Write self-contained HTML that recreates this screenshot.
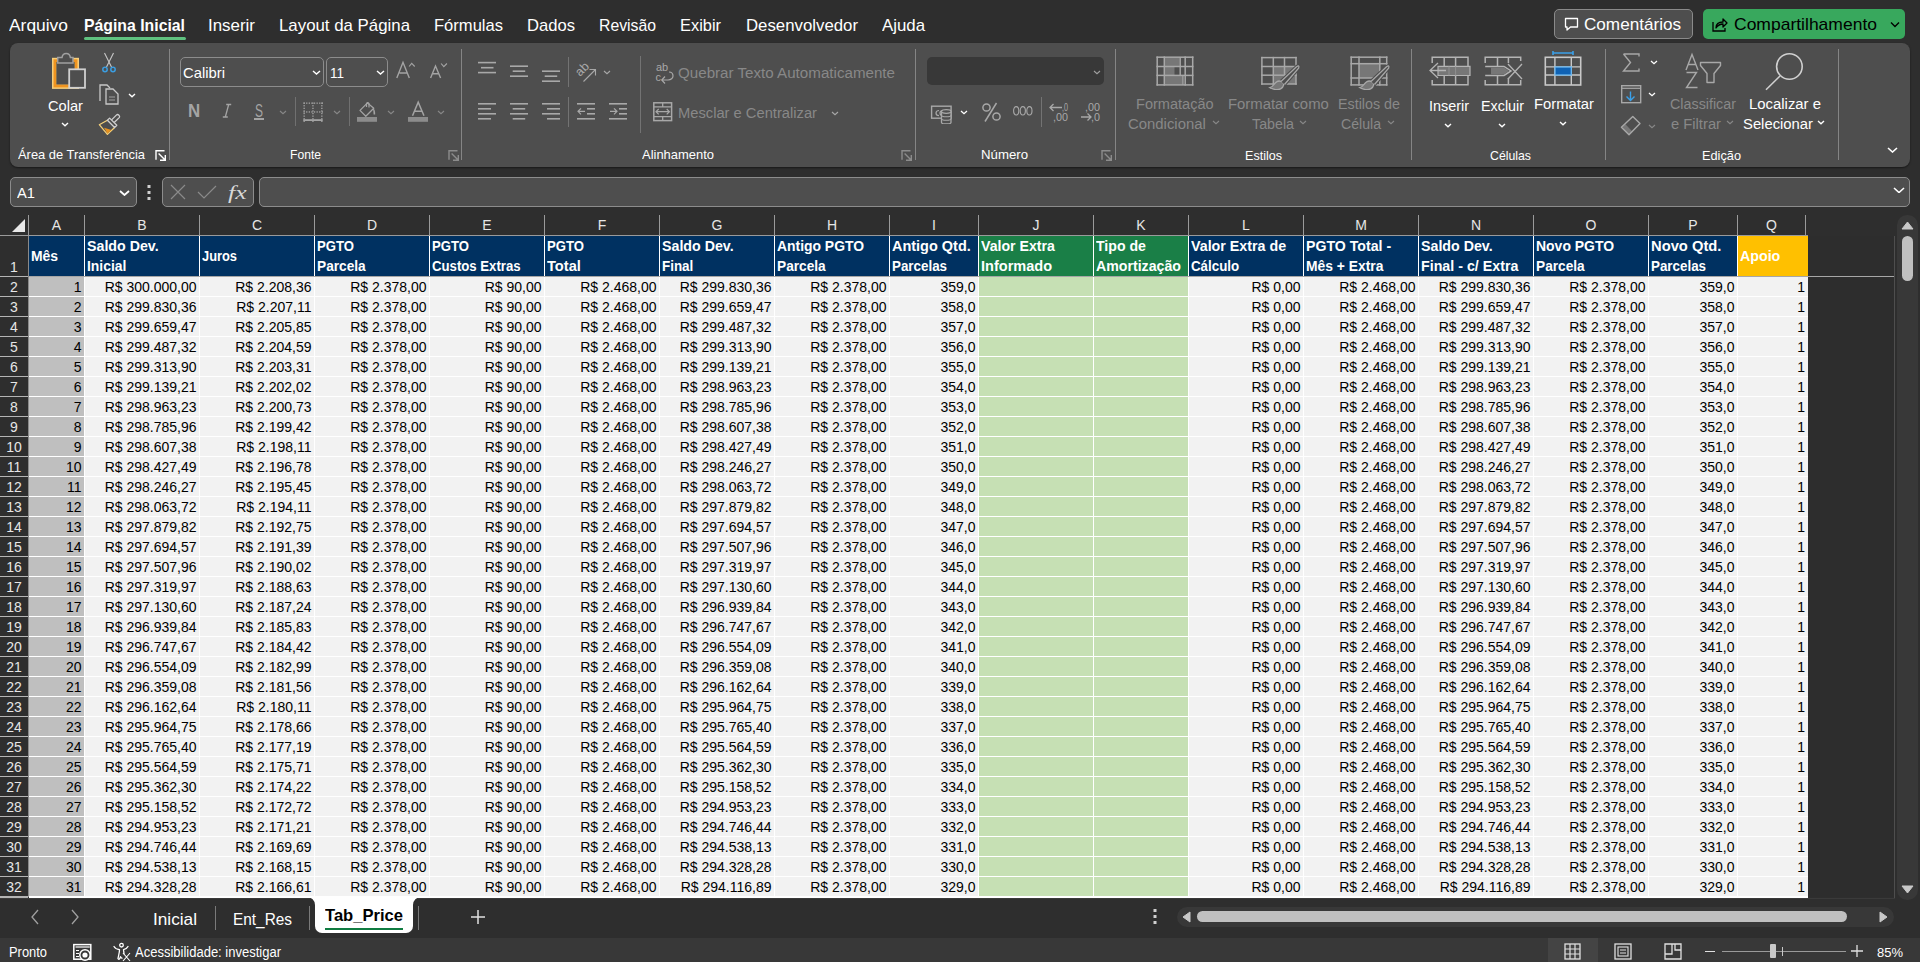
<!DOCTYPE html><html><head><meta charset="utf-8"><style>*{margin:0;padding:0}html,body{width:1920px;height:962px;overflow:hidden;background:#2e2e2e}
body{position:relative;font-family:"Liberation Sans",sans-serif}
body>div{position:absolute}
.t{white-space:nowrap}</style></head><body><div style="left:0px;top:0px;width:1920px;height:962px;background:#2e2e2e;"></div>
<div class="t" style="left:9px;top:16.61px;font-size:17px;line-height:17px;color:#ffffff;font-weight:400;transform:scaleX(1.0235);transform-origin:left 0;">Arquivo</div>
<div class="t" style="left:84px;top:16.61px;font-size:17px;line-height:17px;color:#ffffff;font-weight:700;transform:scaleX(0.9296);transform-origin:left 0;">Página Inicial</div>
<div class="t" style="left:208px;top:16.61px;font-size:17px;line-height:17px;color:#ffffff;font-weight:400;transform:scaleX(0.9951);transform-origin:left 0;">Inserir</div>
<div class="t" style="left:279px;top:16.61px;font-size:17px;line-height:17px;color:#ffffff;font-weight:400;transform:scaleX(0.9899);transform-origin:left 0;">Layout da Página</div>
<div class="t" style="left:434px;top:16.61px;font-size:17px;line-height:17px;color:#ffffff;font-weight:400;transform:scaleX(0.9739);transform-origin:left 0;">Fórmulas</div>
<div class="t" style="left:527px;top:16.61px;font-size:17px;line-height:17px;color:#ffffff;font-weight:400;transform:scaleX(0.9768);transform-origin:left 0;">Dados</div>
<div class="t" style="left:599px;top:16.61px;font-size:17px;line-height:17px;color:#ffffff;font-weight:400;transform:scaleX(0.9280);transform-origin:left 0;">Revisão</div>
<div class="t" style="left:680px;top:16.61px;font-size:17px;line-height:17px;color:#ffffff;font-weight:400;transform:scaleX(0.9645);transform-origin:left 0;">Exibir</div>
<div class="t" style="left:746px;top:16.61px;font-size:17px;line-height:17px;color:#ffffff;font-weight:400;transform:scaleX(0.9876);transform-origin:left 0;">Desenvolvedor</div>
<div class="t" style="left:882px;top:16.61px;font-size:17px;line-height:17px;color:#ffffff;font-weight:400;transform:scaleX(0.9889);transform-origin:left 0;">Ajuda</div>
<div style="left:84px;top:37px;width:102px;height:3px;background:#5fc17f;border-radius:2px;"></div>
<div style="left:1554px;top:9px;width:137px;height:28px;background:#4e4e4e;border:1px solid #8a8a8a;border-radius:5px;box-sizing:content-box;"></div>
<svg style="position:absolute;left:1564px;top:17px;" width="15" height="14" viewBox="0 0 15 14"><path d="M1.5 1.5h12v8.5h-7l-3.5 3v-3h-1.5z" fill="none" stroke="#fff" stroke-width="1.3" stroke-linejoin="round"/></svg>
<div class="t" style="left:1584px;top:15.61px;font-size:17px;line-height:17px;color:#ffffff;font-weight:400;transform:scaleX(1.0065);transform-origin:left 0;">Comentários</div>
<div style="left:1703px;top:9px;width:202px;height:30px;background:#38a85d;border-radius:5px;"></div>
<svg style="position:absolute;left:1712px;top:16px;" width="16" height="16" viewBox="0 0 16 16"><path d="M1 6v9h12v-3" fill="none" stroke="#000" stroke-width="1.3"/><path d="M4 12c0-4 3-6 7-6V3l4 4-4 4V8c-3 0-5 1-7 4z" fill="none" stroke="#000" stroke-width="1.3" stroke-linejoin="round"/></svg>
<div class="t" style="left:1734px;top:15.61px;font-size:17px;line-height:17px;color:#000000;font-weight:400;transform:scaleX(1.0295);transform-origin:left 0;">Compartilhamento</div>
<svg style="position:absolute;left:1890px;top:21px;" width="10" height="7" viewBox="0 0 10 7"><path d="M1 1.5l4 4 4-4" fill="none" stroke="#000" stroke-width="1.4"/></svg>
<div style="left:10px;top:43px;width:1900px;height:124px;background:#4e4e4e;border-radius:8px;box-shadow:0 1px 2px rgba(0,0,0,.5);"></div>
<div style="left:169px;top:49px;width:1px;height:111px;background:#858585;"></div>
<div style="left:461px;top:49px;width:1px;height:111px;background:#858585;"></div>
<div style="left:915px;top:49px;width:1px;height:111px;background:#858585;"></div>
<div style="left:1115px;top:49px;width:1px;height:111px;background:#858585;"></div>
<div style="left:1411px;top:49px;width:1px;height:111px;background:#858585;"></div>
<div style="left:1605px;top:49px;width:1px;height:111px;background:#858585;"></div>
<div style="left:1838px;top:49px;width:1px;height:111px;background:#858585;"></div>
<svg style="position:absolute;left:46px;top:48px;" width="44" height="46" viewBox="0 0 44 46"><rect x="8.1" y="11.9" width="22.8" height="26.9" fill="none" stroke="#f6cf7c" stroke-width="4.2"/><rect x="8.85" y="12.65" width="21.3" height="25.4" fill="none" stroke="#ef9420" stroke-width="2.7"/><path d="M11.7 15V9.6H16Q16.5 5.5 20.2 5.5Q23.9 5.5 24.4 9.6H27V15Z" fill="#4e4e4e" stroke="#a0a0a0" stroke-width="1.5"/><rect x="23.2" y="21.3" width="15.8" height="18.5" fill="#4e4e4e" stroke="#d0d0d0" stroke-width="1.8"/></svg>
<div class="t" style="left:48px;top:98.30px;font-size:15px;line-height:15px;color:#ffffff;font-weight:400;transform:scaleX(0.9764);transform-origin:left 0;">Colar</div>
<svg style="position:absolute;left:61px;top:122px;" width="8" height="6" viewBox="0 0 8 6"><path d="M1 1l3.0 2.7 3.0 -2.7" fill="none" stroke="#ffffff" stroke-width="1.4"/></svg>
<svg style="position:absolute;left:101px;top:52px;" width="16" height="21" viewBox="0 0 16 21"><path d="M3.5 1l7 14M12.5 1l-7 14" stroke="#c8c8c8" stroke-width="1.1"/><circle cx="4" cy="17.5" r="2.2" fill="none" stroke="#3b9de0" stroke-width="1.5"/><circle cx="12" cy="17.5" r="2.2" fill="none" stroke="#3b9de0" stroke-width="1.5"/></svg>
<svg style="position:absolute;left:98px;top:83px;" width="22" height="22" viewBox="0 0 22 22"><path d="M2 18V2h7l3 3" fill="none" stroke="#c8c8c8" stroke-width="1.3"/><path d="M8 6h7l5 5v10H8z" fill="none" stroke="#c8c8c8" stroke-width="1.3"/><path d="M11 14h6M11 17h6" stroke="#a0a0a0" stroke-width="1.2"/></svg>
<svg style="position:absolute;left:128px;top:93px;" width="8" height="6" viewBox="0 0 8 6"><path d="M1 1l3.0 2.7 3.0 -2.7" fill="none" stroke="#ffffff" stroke-width="1.4"/></svg>
<svg style="position:absolute;left:94px;top:110px;" width="30" height="30" viewBox="0 0 30 30"><path d="M13.4 10.3L5.3 14.7L13.4 24.4L20.6 17.5" fill="none" stroke="#f5d07a" stroke-width="1.3" stroke-linejoin="round"/><path d="M10 17.8L17.5 20L13.4 23.6Z" fill="#e8921e"/><path d="M13.4 10.3L15.6 8.1L22.8 15.3L20.6 17.5Z" fill="none" stroke="#d0d0d0" stroke-width="1.3" stroke-linejoin="round"/><path d="M17.6 9.9L22.6 4.9Q23.6 4 24.6 5L25.2 5.6Q26.1 6.6 25.2 7.6L20.2 12.5" fill="none" stroke="#d0d0d0" stroke-width="1.3"/></svg>
<div class="t" style="left:18px;top:148.00px;font-size:13px;line-height:13px;color:#ffffff;font-weight:400;transform:scaleX(0.9929);transform-origin:left 0;">Área de Transferência</div>
<svg style="position:absolute;left:154px;top:149px;" width="13" height="13" viewBox="0 0 13 13"><path d="M2 10.8V1.8H10.5" fill="none" stroke="#ffffff" stroke-width="1.4"/><path d="M4.6 4.6L10.6 10.6M6 11.3H11.3V6" fill="none" stroke="#ffffff" stroke-width="1.4"/></svg>
<div style="left:180px;top:57px;width:142px;height:28px;background:#4e4e4e;border:1px solid #8c8c8c;border-radius:5px;box-sizing:content-box;"></div>
<div class="t" style="left:183px;top:65.30px;font-size:15px;line-height:15px;color:#ffffff;font-weight:400;transform:scaleX(0.9880);transform-origin:left 0;">Calibri</div>
<svg style="position:absolute;left:312px;top:70px;" width="9" height="6" viewBox="0 0 9 6"><path d="M1 1l3.5 3.1 3.5 -3.1" fill="none" stroke="#ffffff" stroke-width="1.4"/></svg>
<div style="left:326px;top:57px;width:60px;height:28px;background:#4e4e4e;border:1px solid #8c8c8c;border-radius:5px;box-sizing:content-box;"></div>
<div class="t" style="left:330px;top:65.30px;font-size:15px;line-height:15px;color:#ffffff;font-weight:400;transform:scaleX(0.8991);transform-origin:left 0;">11</div>
<svg style="position:absolute;left:376px;top:70px;" width="9" height="6" viewBox="0 0 9 6"><path d="M1 1l3.5 3.1 3.5 -3.1" fill="none" stroke="#ffffff" stroke-width="1.4"/></svg>
<svg style="position:absolute;left:390px;top:55px;" width="60" height="28" viewBox="0 0 60 28"><path d="M6.8 78L13 62.3L19.3 78M9.6 73h7.2" transform="translate(0 -55)" fill="none" stroke="#a4a4a4" stroke-width="1.4"/><path d="M19.1 11.5l2.6-3.2 3 3.2" fill="none" stroke="#a4a4a4" stroke-width="1.1"/><path d="M40.6 23L45.5 11L50.6 23M42.6 18.8h6" fill="none" stroke="#a4a4a4" stroke-width="1.4"/><path d="M51.1 8.5l2.7 3.2 3.1-3.2" fill="none" stroke="#a4a4a4" stroke-width="1.1"/></svg>
<div class="t" style="left:188px;top:101.96px;font-size:18px;line-height:18px;color:#a4a4a4;font-weight:700;transform:scaleX(0.9385);transform-origin:left 0;">N</div>
<svg style="position:absolute;left:220px;top:102px;" width="14" height="18" viewBox="0 0 14 18"><path d="M6.2 2.5h5M8.7 2.5L5.3 15M2.8 15h5" fill="none" stroke="#a4a4a4" stroke-width="1.3"/></svg>
<div class="t" style="left:254.6px;top:101.96px;font-size:18px;line-height:18px;color:#a4a4a4;font-weight:400;transform:scaleX(0.6663);transform-origin:left 0;">S</div>
<div style="left:254px;top:118.3px;width:10px;height:1.6px;background:#a4a4a4;"></div>
<svg style="position:absolute;left:279px;top:110px;" width="8" height="6" viewBox="0 0 8 6"><path d="M1 1l3.0 2.7 3.0 -2.7" fill="none" stroke="#888888" stroke-width="1.1"/></svg>
<div style="left:295px;top:97px;width:1px;height:29px;background:#707070;"></div>
<svg style="position:absolute;left:302.5px;top:102px;" width="21" height="21" viewBox="0 0 21 21"><rect x="0.50" y="0.5" width="1.3" height="1.3" fill="#a4a4a4"/><rect x="0.50" y="9.3" width="1.3" height="1.3" fill="#a4a4a4"/><rect x="0.5" y="0.50" width="1.3" height="1.3" fill="#a4a4a4"/><rect x="9.3" y="0.50" width="1.3" height="1.3" fill="#a4a4a4"/><rect x="18.2" y="0.50" width="1.3" height="1.3" fill="#a4a4a4"/><rect x="3.10" y="0.5" width="1.3" height="1.3" fill="#a4a4a4"/><rect x="3.10" y="9.3" width="1.3" height="1.3" fill="#a4a4a4"/><rect x="0.5" y="3.10" width="1.3" height="1.3" fill="#a4a4a4"/><rect x="9.3" y="3.10" width="1.3" height="1.3" fill="#a4a4a4"/><rect x="18.2" y="3.10" width="1.3" height="1.3" fill="#a4a4a4"/><rect x="5.70" y="0.5" width="1.3" height="1.3" fill="#a4a4a4"/><rect x="5.70" y="9.3" width="1.3" height="1.3" fill="#a4a4a4"/><rect x="0.5" y="5.70" width="1.3" height="1.3" fill="#a4a4a4"/><rect x="9.3" y="5.70" width="1.3" height="1.3" fill="#a4a4a4"/><rect x="18.2" y="5.70" width="1.3" height="1.3" fill="#a4a4a4"/><rect x="8.30" y="0.5" width="1.3" height="1.3" fill="#a4a4a4"/><rect x="8.30" y="9.3" width="1.3" height="1.3" fill="#a4a4a4"/><rect x="0.5" y="8.30" width="1.3" height="1.3" fill="#a4a4a4"/><rect x="9.3" y="8.30" width="1.3" height="1.3" fill="#a4a4a4"/><rect x="18.2" y="8.30" width="1.3" height="1.3" fill="#a4a4a4"/><rect x="10.90" y="0.5" width="1.3" height="1.3" fill="#a4a4a4"/><rect x="10.90" y="9.3" width="1.3" height="1.3" fill="#a4a4a4"/><rect x="0.5" y="10.90" width="1.3" height="1.3" fill="#a4a4a4"/><rect x="9.3" y="10.90" width="1.3" height="1.3" fill="#a4a4a4"/><rect x="18.2" y="10.90" width="1.3" height="1.3" fill="#a4a4a4"/><rect x="13.50" y="0.5" width="1.3" height="1.3" fill="#a4a4a4"/><rect x="13.50" y="9.3" width="1.3" height="1.3" fill="#a4a4a4"/><rect x="0.5" y="13.50" width="1.3" height="1.3" fill="#a4a4a4"/><rect x="9.3" y="13.50" width="1.3" height="1.3" fill="#a4a4a4"/><rect x="18.2" y="13.50" width="1.3" height="1.3" fill="#a4a4a4"/><rect x="16.10" y="0.5" width="1.3" height="1.3" fill="#a4a4a4"/><rect x="16.10" y="9.3" width="1.3" height="1.3" fill="#a4a4a4"/><rect x="0.5" y="16.10" width="1.3" height="1.3" fill="#a4a4a4"/><rect x="9.3" y="16.10" width="1.3" height="1.3" fill="#a4a4a4"/><rect x="18.2" y="16.10" width="1.3" height="1.3" fill="#a4a4a4"/><rect x="18.70" y="0.5" width="1.3" height="1.3" fill="#a4a4a4"/><rect x="18.70" y="9.3" width="1.3" height="1.3" fill="#a4a4a4"/><rect x="0.5" y="18.70" width="1.3" height="1.3" fill="#a4a4a4"/><rect x="9.3" y="18.70" width="1.3" height="1.3" fill="#a4a4a4"/><rect x="18.2" y="18.70" width="1.3" height="1.3" fill="#a4a4a4"/><rect x="0.3" y="17.2" width="19.4" height="1.8" fill="#a4a4a4"/></svg>
<svg style="position:absolute;left:333px;top:110px;" width="8" height="6" viewBox="0 0 8 6"><path d="M1 1l3.0 2.7 3.0 -2.7" fill="none" stroke="#888888" stroke-width="1.1"/></svg>
<div style="left:349px;top:97px;width:1px;height:29px;background:#707070;"></div>
<svg style="position:absolute;left:355px;top:100px;" width="24" height="24" viewBox="0 0 24 24"><path d="M5 10.4L12.5 2.9L18.75 8.3L10.8 16.25Z" fill="none" stroke="#a4a4a4" stroke-width="1.3" stroke-linejoin="round"/><path d="M11.5 7V3.5Q12.7 1.5 14 3.5V7.5" fill="none" stroke="#a4a4a4" stroke-width="1.2"/><path d="M17.8 7.5Q20.3 9.5 20.2 14.6L18.6 14.6Q18.4 10.5 17.8 7.5Z" fill="#a4a4a4"/><rect x="2" y="17" width="20" height="4.8" fill="#8c8c8c"/></svg>
<svg style="position:absolute;left:387px;top:110px;" width="8" height="6" viewBox="0 0 8 6"><path d="M1 1l3.0 2.7 3.0 -2.7" fill="none" stroke="#888888" stroke-width="1.1"/></svg>
<svg style="position:absolute;left:405px;top:100px;" width="26" height="24" viewBox="0 0 26 24"><path d="M7.5 15.8L13.2 2.2L19 15.8M9.4 11.3h7.6" fill="none" stroke="#a4a4a4" stroke-width="1.5"/><rect x="3" y="17" width="20" height="4.8" fill="#8c8c8c"/></svg>
<svg style="position:absolute;left:437px;top:110px;" width="8" height="6" viewBox="0 0 8 6"><path d="M1 1l3.0 2.7 3.0 -2.7" fill="none" stroke="#888888" stroke-width="1.1"/></svg>
<div class="t" style="left:290px;top:148.00px;font-size:13px;line-height:13px;color:#ffffff;font-weight:400;transform:scaleX(0.9325);transform-origin:left 0;">Fonte</div>
<svg style="position:absolute;left:447px;top:149px;" width="13" height="13" viewBox="0 0 13 13"><path d="M2 10.8V1.8H10.5" fill="none" stroke="#8c8c8c" stroke-width="1.4"/><path d="M4.6 4.6L10.6 10.6M6 11.3H11.3V6" fill="none" stroke="#8c8c8c" stroke-width="1.4"/></svg>
<svg style="position:absolute;left:478px;top:61px;" width="24" height="24" viewBox="0 0 24 24"><rect x="0" y="0.8" width="18" height="1.6" fill="#a8a8a8"/><rect x="3" y="5.9" width="12.5" height="1.6" fill="#a8a8a8"/><rect x="0" y="10.8" width="18" height="1.6" fill="#a8a8a8"/></svg>
<svg style="position:absolute;left:510px;top:65px;" width="24" height="24" viewBox="0 0 24 24"><rect x="0" y="0.4" width="18" height="1.6" fill="#a8a8a8"/><rect x="2.7" y="5.4" width="12.5" height="1.6" fill="#a8a8a8"/><rect x="0" y="10.4" width="18" height="1.6" fill="#a8a8a8"/></svg>
<svg style="position:absolute;left:542px;top:70px;" width="24" height="24" viewBox="0 0 24 24"><rect x="0" y="0.4" width="18" height="1.6" fill="#a8a8a8"/><rect x="2.7" y="5.4" width="12.5" height="1.6" fill="#a8a8a8"/><rect x="0" y="10.4" width="18" height="1.6" fill="#a8a8a8"/></svg>
<div style="left:568px;top:57px;width:1px;height:30px;background:#737373;"></div>
<svg style="position:absolute;left:575px;top:60px;" width="30" height="24" viewBox="0 0 30 24"><text x="0" y="0" font-size="12.5" fill="#a8a8a8" font-family="Liberation Sans" transform="translate(5 17) rotate(-45)">ab</text><path d="M8.5 21.5L20.5 9.5M14.5 9.5h6v6" fill="none" stroke="#a8a8a8" stroke-width="1.1"/></svg>
<svg style="position:absolute;left:603px;top:70px;" width="8" height="6" viewBox="0 0 8 6"><path d="M1 1l3.0 2.7 3.0 -2.7" fill="none" stroke="#a8a8a8" stroke-width="1.1"/></svg>
<svg style="position:absolute;left:478px;top:103px;" width="24" height="24" viewBox="0 0 24 24"><rect x="0" y="0" width="18" height="1.6" fill="#a8a8a8"/><rect x="0" y="5" width="13" height="1.6" fill="#a8a8a8"/><rect x="0" y="10" width="18" height="1.6" fill="#a8a8a8"/><rect x="0" y="15" width="13" height="1.6" fill="#a8a8a8"/></svg>
<svg style="position:absolute;left:510px;top:103px;" width="24" height="24" viewBox="0 0 24 24"><rect x="0" y="0" width="18" height="1.6" fill="#a8a8a8"/><rect x="2.7" y="5" width="12.5" height="1.6" fill="#a8a8a8"/><rect x="0" y="10" width="18" height="1.6" fill="#a8a8a8"/><rect x="2.7" y="15" width="12.5" height="1.6" fill="#a8a8a8"/></svg>
<svg style="position:absolute;left:542px;top:103px;" width="24" height="24" viewBox="0 0 24 24"><rect x="0" y="0" width="18" height="1.6" fill="#a8a8a8"/><rect x="5" y="5" width="13" height="1.6" fill="#a8a8a8"/><rect x="0" y="10" width="18" height="1.6" fill="#a8a8a8"/><rect x="5" y="15" width="13" height="1.6" fill="#a8a8a8"/></svg>
<div style="left:568px;top:97px;width:1px;height:30px;background:#737373;"></div>
<svg style="position:absolute;left:577px;top:103px;" width="20" height="18" viewBox="0 0 20 18"><rect x="0" y="0" width="18" height="1.6" fill="#a8a8a8"/><rect x="10" y="5" width="8" height="1.6" fill="#a8a8a8"/><rect x="10" y="10" width="8" height="1.6" fill="#a8a8a8"/><rect x="0" y="15" width="18" height="1.6" fill="#a8a8a8"/><path d="M8 8.3H1M4 5.3l-3 3 3 3" fill="none" stroke="#a8a8a8" stroke-width="1.2"/></svg>
<svg style="position:absolute;left:609px;top:103px;" width="20" height="18" viewBox="0 0 20 18"><rect x="0" y="0" width="18" height="1.6" fill="#a8a8a8"/><rect x="10" y="5" width="8" height="1.6" fill="#a8a8a8"/><rect x="10" y="10" width="8" height="1.6" fill="#a8a8a8"/><rect x="0" y="15" width="18" height="1.6" fill="#a8a8a8"/><path d="M1 8.3h7M5 5.3l3 3-3 3" fill="none" stroke="#a8a8a8" stroke-width="1.2"/></svg>
<div style="left:640px;top:56px;width:1px;height:77px;background:#737373;"></div>
<svg style="position:absolute;left:654px;top:61px;" width="22" height="23" viewBox="0 0 22 23"><text x="2" y="10" font-size="11" fill="#a8a8a8" font-family="Liberation Sans">ab</text><text x="1.5" y="19.5" font-size="11" fill="#a8a8a8" font-family="Liberation Sans">c</text><path d="M15 11c3 0 4 2 4 4s-2 4-5 4H8M11 15.5l-3.3 3.5 3.3 3.5" fill="none" stroke="#a8a8a8" stroke-width="1.2"/></svg>
<div class="t" style="left:678px;top:64.88px;font-size:15.5px;line-height:15.5px;color:#888888;font-weight:400;transform:scaleX(0.9774);transform-origin:left 0;">Quebrar Texto Automaticamente</div>
<svg style="position:absolute;left:653px;top:102px;" width="20" height="20" viewBox="0 0 20 20"><rect x="0.8" y="0.8" width="17.8" height="17.8" fill="none" stroke="#a8a8a8" stroke-width="1.5"/><path d="M0.8 4.8h17.8M0.8 14.6h17.8M9.7 0.8v4M9.7 14.6v4" fill="none" stroke="#a8a8a8" stroke-width="1.3"/><path d="M3 9.7h13.4M5.7 7l-2.7 2.7 2.7 2.7M13.7 7l2.7 2.7-2.7 2.7" fill="none" stroke="#a8a8a8" stroke-width="1.2"/></svg>
<div class="t" style="left:678px;top:104.88px;font-size:15.5px;line-height:15.5px;color:#888888;font-weight:400;transform:scaleX(0.9492);transform-origin:left 0;">Mesclar e Centralizar</div>
<svg style="position:absolute;left:831px;top:111px;" width="8" height="6" viewBox="0 0 8 6"><path d="M1 1l3.0 2.7 3.0 -2.7" fill="none" stroke="#a8a8a8" stroke-width="1.1"/></svg>
<div class="t" style="left:642px;top:148.00px;font-size:13px;line-height:13px;color:#ffffff;font-weight:400;transform:scaleX(0.9963);transform-origin:left 0;">Alinhamento</div>
<svg style="position:absolute;left:900px;top:149px;" width="13" height="13" viewBox="0 0 13 13"><path d="M2 10.8V1.8H10.5" fill="none" stroke="#8c8c8c" stroke-width="1.4"/><path d="M4.6 4.6L10.6 10.6M6 11.3H11.3V6" fill="none" stroke="#8c8c8c" stroke-width="1.4"/></svg>
<div style="left:927px;top:57px;width:177px;height:28px;background:#383838;border-radius:5px;"></div>
<svg style="position:absolute;left:1093px;top:70px;" width="8" height="6" viewBox="0 0 8 6"><path d="M1 1l3.0 2.7 3.0 -2.7" fill="none" stroke="#a0a0a0" stroke-width="1.1"/></svg>
<svg style="position:absolute;left:930px;top:104px;" width="24" height="20" viewBox="0 0 24 20"><rect x="1.6" y="2.2" width="19.5" height="12" fill="none" stroke="#a8a8a8" stroke-width="1.4"/><path d="M9 6.5a3 2.6 0 1 0 0 5.2M13 6.5a3 2.6 0 1 0 0 5.2" fill="none" stroke="#a8a8a8" stroke-width="1.2"/><path d="M11.5 7.5v11c0 2 9.5 2 9.5 0v-11" fill="#4e4e4e" stroke="#a8a8a8" stroke-width="1.3"/><ellipse cx="16.25" cy="7.5" rx="4.75" ry="1.8" fill="#4e4e4e" stroke="#a8a8a8" stroke-width="1.3"/><path d="M11.5 11.2c0 2 9.5 2 9.5 0M11.5 14.8c0 2 9.5 2 9.5 0" fill="none" stroke="#a8a8a8" stroke-width="1.1"/></svg>
<svg style="position:absolute;left:960px;top:110px;" width="8" height="6" viewBox="0 0 8 6"><path d="M1 1l3.0 2.7 3.0 -2.7" fill="none" stroke="#ffffff" stroke-width="1.3"/></svg>
<svg style="position:absolute;left:981px;top:102px;" width="22" height="20" viewBox="0 0 22 20"><circle cx="5.5" cy="5.5" r="3.6" fill="none" stroke="#a8a8a8" stroke-width="1.5"/><circle cx="15.5" cy="14.5" r="3.6" fill="none" stroke="#a8a8a8" stroke-width="1.5"/><path d="M15.5 1L4 19.5" stroke="#a8a8a8" stroke-width="1.5"/></svg>
<svg style="position:absolute;left:1013px;top:105px;" width="22" height="12" viewBox="0 0 22 12"><ellipse cx="3.2" cy="5.8" rx="2.6" ry="4.2" fill="none" stroke="#a8a8a8" stroke-width="1.1"/><ellipse cx="9.8" cy="5.8" rx="2.6" ry="4.2" fill="none" stroke="#a8a8a8" stroke-width="1.1"/><ellipse cx="16.4" cy="5.8" rx="2.6" ry="4.2" fill="none" stroke="#a8a8a8" stroke-width="1.1"/></svg>
<div style="left:1041px;top:97px;width:1px;height:30px;background:#737373;"></div>
<svg style="position:absolute;left:1047px;top:101px;" width="24" height="22" viewBox="0 0 24 22"><path d="M15 6.5H3M6.5 3L3 6.5 6.5 10" fill="none" stroke="#a8a8a8" stroke-width="1.3"/><text x="15" y="10" font-size="11" fill="#a8a8a8" font-family="Liberation Sans" textLength="6" lengthAdjust="spacingAndGlyphs">,0</text><text x="6" y="20" font-size="11" fill="#a8a8a8" font-family="Liberation Sans" textLength="15" lengthAdjust="spacingAndGlyphs">,00</text></svg>
<svg style="position:absolute;left:1079px;top:101px;" width="24" height="22" viewBox="0 0 24 22"><text x="6" y="10" font-size="11" fill="#a8a8a8" font-family="Liberation Sans" textLength="15" lengthAdjust="spacingAndGlyphs">,00</text><path d="M2 16h10M8.5 12.5L12 16l-3.5 3.5" fill="none" stroke="#a8a8a8" stroke-width="1.3"/><text x="12" y="20" font-size="11" fill="#a8a8a8" font-family="Liberation Sans" textLength="9" lengthAdjust="spacingAndGlyphs">,0</text></svg>
<div class="t" style="left:981px;top:148.00px;font-size:13px;line-height:13px;color:#ffffff;font-weight:400;transform:scaleX(1.0165);transform-origin:left 0;">Número</div>
<svg style="position:absolute;left:1100px;top:149px;" width="13" height="13" viewBox="0 0 13 13"><path d="M2 10.8V1.8H10.5" fill="none" stroke="#8c8c8c" stroke-width="1.4"/><path d="M4.6 4.6L10.6 10.6M6 11.3H11.3V6" fill="none" stroke="#8c8c8c" stroke-width="1.4"/></svg>
<svg style="position:absolute;left:1150px;top:50px;" width="48" height="40" viewBox="0 0 48 40"><rect x="15" y="8" width="14.7" height="8" fill="#777777"/><rect x="15" y="17" width="9.5" height="8" fill="#777777"/><rect x="15" y="26" width="17" height="8.5" fill="#777777"/><rect x="6.45" y="6.45" width="1.5" height="29.20" fill="#a8a8a8"/><rect x="13.55" y="6.45" width="1.5" height="29.20" fill="#a8a8a8"/><rect x="34.45" y="6.45" width="1.5" height="29.20" fill="#a8a8a8"/><rect x="41.95" y="6.45" width="1.5" height="29.20" fill="#a8a8a8"/><rect x="6.45" y="6.45" width="37.00" height="1.5" fill="#a8a8a8"/><rect x="6.45" y="15.75" width="37.00" height="1.5" fill="#a8a8a8"/><rect x="6.45" y="24.65" width="37.00" height="1.5" fill="#a8a8a8"/><rect x="6.45" y="34.15" width="37.00" height="1.5" fill="#a8a8a8"/><rect x="29.5" y="7.2" width="1.4" height="18.2" fill="#a8a8a8"/><rect x="32.2" y="25.4" width="1.4" height="9.5" fill="#a8a8a8"/></svg>
<div class="t" style="left:1135.5px;top:95.88px;font-size:15.5px;line-height:15.5px;color:#888888;font-weight:400;transform:scaleX(0.9383);transform-origin:left 0;">Formatação</div>
<div class="t" style="left:1128.2px;top:115.88px;font-size:15.5px;line-height:15.5px;color:#888888;font-weight:400;transform:scaleX(0.9605);transform-origin:left 0;">Condicional</div>
<svg style="position:absolute;left:1212px;top:120px;" width="8" height="6" viewBox="0 0 8 6"><path d="M1 1l3.0 2.7 3.0 -2.7" fill="none" stroke="#888888" stroke-width="1.1"/></svg>
<svg style="position:absolute;left:1254px;top:50px;" width="48" height="40" viewBox="0 0 48 40"><rect x="19.3" y="16.5" width="22.7" height="17.5" fill="#777777"/><rect x="7.15" y="6.85" width="1.5" height="27.90" fill="#a8a8a8"/><rect x="18.55" y="6.85" width="1.5" height="27.90" fill="#a8a8a8"/><rect x="29.75" y="6.85" width="1.5" height="27.90" fill="#a8a8a8"/><rect x="41.25" y="6.85" width="1.5" height="27.90" fill="#a8a8a8"/><rect x="7.15" y="6.85" width="35.60" height="1.5" fill="#a8a8a8"/><rect x="7.15" y="15.75" width="35.60" height="1.5" fill="#a8a8a8"/><rect x="7.15" y="24.45" width="35.60" height="1.5" fill="#a8a8a8"/><rect x="7.15" y="33.25" width="35.60" height="1.5" fill="#a8a8a8"/><path d="M27 31.5L42.5 16.8Q45.8 14.6 44.6 18.2L30.5 34.5Z" fill="none" stroke="#4e4e4e" stroke-width="3.5"/><path d="M16 37.6C19 37.2 20 33.2 23 31.6C26 30 30.2 32.2 29.6 35.2C29 38.4 25 40.2 21.5 39.6C19.5 39.3 17.6 38.6 16 37.6Z" fill="#777777" stroke="#a8a8a8" stroke-width="1.3"/><path d="M27 31.5L42.5 16.8Q45.8 14.6 44.6 18.2L30.5 34.5" fill="#4e4e4e" stroke="#a8a8a8" stroke-width="1.3"/></svg>
<div class="t" style="left:1228.4px;top:95.88px;font-size:15.5px;line-height:15.5px;color:#888888;font-weight:400;transform:scaleX(0.9592);transform-origin:left 0;">Formatar como</div>
<div class="t" style="left:1252px;top:115.88px;font-size:15.5px;line-height:15.5px;color:#888888;font-weight:400;transform:scaleX(0.9195);transform-origin:left 0;">Tabela</div>
<svg style="position:absolute;left:1299px;top:120px;" width="8" height="6" viewBox="0 0 8 6"><path d="M1 1l3.0 2.7 3.0 -2.7" fill="none" stroke="#888888" stroke-width="1.1"/></svg>
<svg style="position:absolute;left:1344px;top:50px;" width="48" height="40" viewBox="0 0 48 40"><rect x="15" y="13.7" width="21" height="14.3" fill="#777777"/><rect x="6.45" y="6.45" width="1.5" height="29.20" fill="#a8a8a8"/><rect x="14.25" y="6.45" width="1.5" height="29.20" fill="#a8a8a8"/><rect x="35.05" y="6.45" width="1.5" height="29.20" fill="#a8a8a8"/><rect x="41.95" y="6.45" width="1.5" height="29.20" fill="#a8a8a8"/><rect x="6.45" y="6.45" width="37.00" height="1.5" fill="#a8a8a8"/><rect x="6.45" y="12.95" width="37.00" height="1.5" fill="#a8a8a8"/><rect x="6.45" y="27.25" width="37.00" height="1.5" fill="#a8a8a8"/><rect x="6.45" y="34.15" width="37.00" height="1.5" fill="#a8a8a8"/><path d="M27 31.5L42.5 16.8Q45.8 14.6 44.6 18.2L30.5 34.5Z" fill="none" stroke="#4e4e4e" stroke-width="3.5"/><path d="M16 37.6C19 37.2 20 33.2 23 31.6C26 30 30.2 32.2 29.6 35.2C29 38.4 25 40.2 21.5 39.6C19.5 39.3 17.6 38.6 16 37.6Z" fill="#777777" stroke="#a8a8a8" stroke-width="1.3"/><path d="M27 31.5L42.5 16.8Q45.8 14.6 44.6 18.2L30.5 34.5" fill="#4e4e4e" stroke="#a8a8a8" stroke-width="1.3"/></svg>
<div class="t" style="left:1337.5px;top:95.88px;font-size:15.5px;line-height:15.5px;color:#888888;font-weight:400;transform:scaleX(0.9226);transform-origin:left 0;">Estilos de</div>
<div class="t" style="left:1341px;top:115.88px;font-size:15.5px;line-height:15.5px;color:#888888;font-weight:400;transform:scaleX(0.9103);transform-origin:left 0;">Célula</div>
<svg style="position:absolute;left:1387px;top:120px;" width="8" height="6" viewBox="0 0 8 6"><path d="M1 1l3.0 2.7 3.0 -2.7" fill="none" stroke="#888888" stroke-width="1.1"/></svg>
<div class="t" style="left:1245px;top:149.00px;font-size:13px;line-height:13px;color:#ffffff;font-weight:400;transform:scaleX(0.9663);transform-origin:left 0;">Estilos</div>
<svg style="position:absolute;left:1426px;top:50px;" width="48" height="40" viewBox="0 0 48 40"><path d="M6.2 13V7.3h35.8V16M6.2 30v4.7h35.8V25.5" fill="none" stroke="#b4b4b4" stroke-width="1.5"/><path d="M18.2 7.3V16M29.6 7.3V16M18.2 25.5v9.2M29.6 25.5v9.2" stroke="#b4b4b4" stroke-width="1.5"/><path d="M12 16.4h32v9.1H12z" fill="#777777" stroke="#b4b4b4" stroke-width="1.2"/><path d="M23 16.4v9.1M29.6 16.4v9.1" stroke="#909090" stroke-width="1"/><path d="M20 20.5H4M12 13l-8 7.5 8 7.5" fill="none" stroke="#b4b4b4" stroke-width="1.3"/></svg>
<div class="t" style="left:1429px;top:97.88px;font-size:15.5px;line-height:15.5px;color:#ffffff;font-weight:400;transform:scaleX(0.9288);transform-origin:left 0;">Inserir</div>
<svg style="position:absolute;left:1444px;top:123px;" width="8" height="6" viewBox="0 0 8 6"><path d="M1 1l3.0 2.7 3.0 -2.7" fill="none" stroke="#ffffff" stroke-width="1.4"/></svg>
<svg style="position:absolute;left:1480px;top:50px;" width="48" height="40" viewBox="0 0 48 40"><path d="M5.2 13V7.3h35.5V11M5.2 30v4.7h35.5V30" fill="none" stroke="#b4b4b4" stroke-width="1.5"/><path d="M17.5 7.3V16M28.4 7.3V13M17.5 25.5v9.2M28.4 28v6.7" stroke="#b4b4b4" stroke-width="1.5"/><path d="M5.2 16.4H24l7 4.5-7 4.6H5.2" fill="none" stroke="#b4b4b4" stroke-width="1.5"/><path d="M11 17.5h13l5 3.4-5 3.5H11z" fill="#777777"/><path d="M28 14l14 15M42 14L28 29" stroke="#b4b4b4" stroke-width="1.3"/></svg>
<div class="t" style="left:1481px;top:97.88px;font-size:15.5px;line-height:15.5px;color:#ffffff;font-weight:400;transform:scaleX(0.9245);transform-origin:left 0;">Excluir</div>
<svg style="position:absolute;left:1498px;top:123px;" width="8" height="6" viewBox="0 0 8 6"><path d="M1 1l3.0 2.7 3.0 -2.7" fill="none" stroke="#ffffff" stroke-width="1.4"/></svg>
<svg style="position:absolute;left:1540px;top:48px;" width="46" height="42" viewBox="0 0 46 42"><rect x="5.3" y="9.3" width="35.4" height="27.7" fill="none" stroke="#c8c8c8" stroke-width="1.6"/><path d="M5.3 18.9h35.4M5.3 27h35.4M14.9 9.3v27.7M31.3 9.3v27.7" stroke="#c8c8c8" stroke-width="1.4"/><rect x="15" y="19" width="16.3" height="8" fill="#0f62b4" stroke="#6cb8f0" stroke-width="1.3"/><path d="M13 5h20M13 3v4M33 3v4" stroke="#3ba0e8" stroke-width="1.6"/></svg>
<div class="t" style="left:1534px;top:95.88px;font-size:15.5px;line-height:15.5px;color:#ffffff;font-weight:400;transform:scaleX(0.9543);transform-origin:left 0;">Formatar</div>
<svg style="position:absolute;left:1559px;top:121px;" width="8" height="6" viewBox="0 0 8 6"><path d="M1 1l3.0 2.7 3.0 -2.7" fill="none" stroke="#ffffff" stroke-width="1.4"/></svg>
<div class="t" style="left:1490px;top:149.00px;font-size:13px;line-height:13px;color:#ffffff;font-weight:400;transform:scaleX(0.9457);transform-origin:left 0;">Células</div>
<svg style="position:absolute;left:1620px;top:50px;" width="24" height="24" viewBox="0 0 24 24"><path d="M3.5 4h15.5v2.5M3.5 4l7 8.5-7 8.5h15.5v-2.5" fill="none" stroke="#a8a8a8" stroke-width="1.4" stroke-linejoin="miter"/></svg>
<svg style="position:absolute;left:1650px;top:60px;" width="8" height="6" viewBox="0 0 8 6"><path d="M1 1l3.0 2.7 3.0 -2.7" fill="none" stroke="#ffffff" stroke-width="1.3"/></svg>
<svg style="position:absolute;left:1618px;top:82px;" width="26" height="24" viewBox="0 0 26 24"><rect x="3.7" y="3.7" width="19" height="17" fill="none" stroke="#a8a8a8" stroke-width="1.4"/><path d="M3.7 6.3h19" stroke="#a8a8a8" stroke-width="1.2"/><path d="M12.5 9.5v9M8.5 14.5l4 4 4-4" fill="none" stroke="#3ba0e8" stroke-width="1.4"/></svg>
<svg style="position:absolute;left:1648px;top:92px;" width="8" height="6" viewBox="0 0 8 6"><path d="M1 1l3.0 2.7 3.0 -2.7" fill="none" stroke="#ffffff" stroke-width="1.3"/></svg>
<svg style="position:absolute;left:1618px;top:113px;" width="26" height="26" viewBox="0 0 26 26"><path d="M4 14.3L7.2 11.1L14.6 18.7L11.1 22Z" fill="#777777"/><path d="M3.4 14.3L14.8 3.4L22 10.6L11 21.7Z" fill="none" stroke="#a8a8a8" stroke-width="1.4" stroke-linejoin="round"/></svg>
<svg style="position:absolute;left:1648px;top:124px;" width="8" height="6" viewBox="0 0 8 6"><path d="M1 1l3.0 2.7 3.0 -2.7" fill="none" stroke="#888888" stroke-width="1.1"/></svg>
<svg style="position:absolute;left:1680px;top:50px;" width="44" height="42" viewBox="0 0 44 42"><path d="M6 20l6-15.5 6 15.5M8 14.5h8" fill="none" stroke="#a8a8a8" stroke-width="1.4"/><path d="M6.5 22.5h10L6.5 37.5h11" fill="none" stroke="#a8a8a8" stroke-width="1.4"/><path d="M20.5 12.5h20v3l-6.5 8v9h-7v-9l-6.5-8z" fill="none" stroke="#a8a8a8" stroke-width="1.4" stroke-linejoin="round"/></svg>
<div class="t" style="left:1670px;top:95.88px;font-size:15.5px;line-height:15.5px;color:#888888;font-weight:400;transform:scaleX(0.9233);transform-origin:left 0;">Classificar</div>
<div class="t" style="left:1671px;top:115.88px;font-size:15.5px;line-height:15.5px;color:#888888;font-weight:400;transform:scaleX(0.9518);transform-origin:left 0;">e Filtrar</div>
<svg style="position:absolute;left:1726px;top:120px;" width="8" height="6" viewBox="0 0 8 6"><path d="M1 1l3.0 2.7 3.0 -2.7" fill="none" stroke="#888888" stroke-width="1.1"/></svg>
<svg style="position:absolute;left:1760px;top:48px;" width="48" height="48" viewBox="0 0 48 48"><circle cx="29.4" cy="18.5" r="12.8" fill="none" stroke="#d0d0d0" stroke-width="1.6"/><path d="M20 28L6 41.7" stroke="#d0d0d0" stroke-width="1.6"/></svg>
<div class="t" style="left:1749px;top:95.88px;font-size:15.5px;line-height:15.5px;color:#ffffff;font-weight:400;transform:scaleX(0.9605);transform-origin:left 0;">Localizar e</div>
<div class="t" style="left:1743px;top:115.88px;font-size:15.5px;line-height:15.5px;color:#ffffff;font-weight:400;transform:scaleX(0.9557);transform-origin:left 0;">Selecionar</div>
<svg style="position:absolute;left:1817px;top:120px;" width="8" height="6" viewBox="0 0 8 6"><path d="M1 1l3.0 2.7 3.0 -2.7" fill="none" stroke="#ffffff" stroke-width="1.4"/></svg>
<div class="t" style="left:1702px;top:149.00px;font-size:13px;line-height:13px;color:#ffffff;font-weight:400;transform:scaleX(0.9811);transform-origin:left 0;">Edição</div>
<svg style="position:absolute;left:1887px;top:147px;" width="11" height="6" viewBox="0 0 11 6"><path d="M1 1l4.5 4.0 4.5 -4.0" fill="none" stroke="#ffffff" stroke-width="1.6"/></svg>
<div style="left:10px;top:177px;width:125px;height:28px;background:#4e4e4e;border:1px solid #8c8c8c;border-radius:5px;box-sizing:content-box;"></div>
<div class="t" style="left:17px;top:185.30px;font-size:15px;line-height:15px;color:#ffffff;font-weight:400;transform:scaleX(0.9810);transform-origin:left 0;">A1</div>
<svg style="position:absolute;left:119px;top:190px;" width="11" height="6" viewBox="0 0 11 6"><path d="M1 1l4.5 4.0 4.5 -4.0" fill="none" stroke="#ffffff" stroke-width="1.8"/></svg>
<svg style="position:absolute;left:147px;top:185px;" width="5" height="15" viewBox="0 0 5 15"><rect x="0.5" y="0" width="3" height="3" fill="#d0d0d0"/><rect x="0.5" y="6" width="3" height="3" fill="#d0d0d0"/><rect x="0.5" y="12" width="3" height="3" fill="#d0d0d0"/></svg>
<div style="left:162px;top:177px;width:90px;height:28px;background:#4e4e4e;border:1px solid #8c8c8c;border-radius:5px;box-sizing:content-box;"></div>
<svg style="position:absolute;left:170px;top:184px;" width="16" height="16" viewBox="0 0 16 16"><path d="M1 1l14 14M15 1L1 15" stroke="#8a8a8a" stroke-width="1.2"/></svg>
<svg style="position:absolute;left:197px;top:185px;" width="20" height="14" viewBox="0 0 20 14"><path d="M1 7l6 6L19 1" fill="none" stroke="#8a8a8a" stroke-width="1.2"/></svg>
<div class="t" style="left:228px;top:182.92px;font-size:19px;line-height:19px;color:#d8d8d8;font-weight:400;transform:scaleX(1.3533);transform-origin:left 0;font-family:'Liberation Serif',serif;font-style:italic;">fx</div>
<div style="left:259px;top:177px;width:1649px;height:28px;background:#4e4e4e;border:1px solid #8c8c8c;border-radius:5px;box-sizing:content-box;"></div>
<svg style="position:absolute;left:1893px;top:187px;" width="12" height="6" viewBox="0 0 12 6"><path d="M1 1l5.0 4.5 5.0 -4.5" fill="none" stroke="#ffffff" stroke-width="1.6"/></svg>
<div style="left:28px;top:215px;width:1px;height:20px;background:#9a9a9a;"></div>
<div style="left:84px;top:215px;width:1px;height:20px;background:#9a9a9a;"></div>
<div style="left:199px;top:215px;width:1px;height:20px;background:#9a9a9a;"></div>
<div style="left:314px;top:215px;width:1px;height:20px;background:#9a9a9a;"></div>
<div style="left:429px;top:215px;width:1px;height:20px;background:#9a9a9a;"></div>
<div style="left:544px;top:215px;width:1px;height:20px;background:#9a9a9a;"></div>
<div style="left:659px;top:215px;width:1px;height:20px;background:#9a9a9a;"></div>
<div style="left:774px;top:215px;width:1px;height:20px;background:#9a9a9a;"></div>
<div style="left:889px;top:215px;width:1px;height:20px;background:#9a9a9a;"></div>
<div style="left:978px;top:215px;width:1px;height:20px;background:#9a9a9a;"></div>
<div style="left:1093px;top:215px;width:1px;height:20px;background:#9a9a9a;"></div>
<div style="left:1188px;top:215px;width:1px;height:20px;background:#9a9a9a;"></div>
<div style="left:1303px;top:215px;width:1px;height:20px;background:#9a9a9a;"></div>
<div style="left:1418px;top:215px;width:1px;height:20px;background:#9a9a9a;"></div>
<div style="left:1533px;top:215px;width:1px;height:20px;background:#9a9a9a;"></div>
<div style="left:1648px;top:215px;width:1px;height:20px;background:#9a9a9a;"></div>
<div style="left:1737px;top:215px;width:1px;height:20px;background:#9a9a9a;"></div>
<div style="left:1805px;top:215px;width:1px;height:20px;background:#9a9a9a;"></div>
<div style="left:0px;top:235px;width:1808px;height:1px;background:#9a9a9a;"></div>
<svg style="position:absolute;left:12px;top:219px;" width="14" height="13" viewBox="0 0 14 13"><path d="M13 0v13H0z" fill="#e8e8e8"/></svg>
<div class="t" style="left:51.83px;width:9.34px;top:218.15px;font-size:14px;line-height:14px;color:#e6e6e6;font-weight:400;">A</div>
<div class="t" style="left:137.33px;width:9.34px;top:218.15px;font-size:14px;line-height:14px;color:#e6e6e6;font-weight:400;">B</div>
<div class="t" style="left:251.94px;width:10.11px;top:218.15px;font-size:14px;line-height:14px;color:#e6e6e6;font-weight:400;">C</div>
<div class="t" style="left:366.94px;width:10.11px;top:218.15px;font-size:14px;line-height:14px;color:#e6e6e6;font-weight:400;">D</div>
<div class="t" style="left:482.33px;width:9.34px;top:218.15px;font-size:14px;line-height:14px;color:#e6e6e6;font-weight:400;">E</div>
<div class="t" style="left:597.72px;width:8.55px;top:218.15px;font-size:14px;line-height:14px;color:#e6e6e6;font-weight:400;">F</div>
<div class="t" style="left:711.56px;width:10.89px;top:218.15px;font-size:14px;line-height:14px;color:#e6e6e6;font-weight:400;">G</div>
<div class="t" style="left:826.94px;width:10.11px;top:218.15px;font-size:14px;line-height:14px;color:#e6e6e6;font-weight:400;">H</div>
<div class="t" style="left:932.06px;width:3.89px;top:218.15px;font-size:14px;line-height:14px;color:#e6e6e6;font-weight:400;">I</div>
<div class="t" style="left:1032.50px;width:7.00px;top:218.15px;font-size:14px;line-height:14px;color:#e6e6e6;font-weight:400;">J</div>
<div class="t" style="left:1136.33px;width:9.34px;top:218.15px;font-size:14px;line-height:14px;color:#e6e6e6;font-weight:400;">K</div>
<div class="t" style="left:1242.11px;width:7.79px;top:218.15px;font-size:14px;line-height:14px;color:#e6e6e6;font-weight:400;">L</div>
<div class="t" style="left:1355.17px;width:11.66px;top:218.15px;font-size:14px;line-height:14px;color:#e6e6e6;font-weight:400;">M</div>
<div class="t" style="left:1470.94px;width:10.11px;top:218.15px;font-size:14px;line-height:14px;color:#e6e6e6;font-weight:400;">N</div>
<div class="t" style="left:1585.56px;width:10.89px;top:218.15px;font-size:14px;line-height:14px;color:#e6e6e6;font-weight:400;">O</div>
<div class="t" style="left:1688.33px;width:9.34px;top:218.15px;font-size:14px;line-height:14px;color:#e6e6e6;font-weight:400;">P</div>
<div class="t" style="left:1766.06px;width:10.89px;top:218.15px;font-size:14px;line-height:14px;color:#e6e6e6;font-weight:400;">Q</div>
<div style="left:0px;top:276px;width:28px;height:1px;background:#b4b4b4;"></div>
<div class="t" style="left:10.11px;width:7.79px;top:260.15px;font-size:14px;line-height:14px;color:#e6e6e6;font-weight:400;">1</div>
<div style="left:0px;top:296px;width:28px;height:1px;background:#b4b4b4;"></div>
<div class="t" style="left:10.11px;width:7.79px;top:280.15px;font-size:14px;line-height:14px;color:#e6e6e6;font-weight:400;">2</div>
<div style="left:0px;top:316px;width:28px;height:1px;background:#b4b4b4;"></div>
<div class="t" style="left:10.11px;width:7.79px;top:300.15px;font-size:14px;line-height:14px;color:#e6e6e6;font-weight:400;">3</div>
<div style="left:0px;top:336px;width:28px;height:1px;background:#b4b4b4;"></div>
<div class="t" style="left:10.11px;width:7.79px;top:320.15px;font-size:14px;line-height:14px;color:#e6e6e6;font-weight:400;">4</div>
<div style="left:0px;top:356px;width:28px;height:1px;background:#b4b4b4;"></div>
<div class="t" style="left:10.11px;width:7.79px;top:340.15px;font-size:14px;line-height:14px;color:#e6e6e6;font-weight:400;">5</div>
<div style="left:0px;top:376px;width:28px;height:1px;background:#b4b4b4;"></div>
<div class="t" style="left:10.11px;width:7.79px;top:360.15px;font-size:14px;line-height:14px;color:#e6e6e6;font-weight:400;">6</div>
<div style="left:0px;top:396px;width:28px;height:1px;background:#b4b4b4;"></div>
<div class="t" style="left:10.11px;width:7.79px;top:380.15px;font-size:14px;line-height:14px;color:#e6e6e6;font-weight:400;">7</div>
<div style="left:0px;top:416px;width:28px;height:1px;background:#b4b4b4;"></div>
<div class="t" style="left:10.11px;width:7.79px;top:400.15px;font-size:14px;line-height:14px;color:#e6e6e6;font-weight:400;">8</div>
<div style="left:0px;top:436px;width:28px;height:1px;background:#b4b4b4;"></div>
<div class="t" style="left:10.11px;width:7.79px;top:420.15px;font-size:14px;line-height:14px;color:#e6e6e6;font-weight:400;">9</div>
<div style="left:0px;top:456px;width:28px;height:1px;background:#b4b4b4;"></div>
<div class="t" style="left:6.21px;width:15.57px;top:440.15px;font-size:14px;line-height:14px;color:#e6e6e6;font-weight:400;">10</div>
<div style="left:0px;top:476px;width:28px;height:1px;background:#b4b4b4;"></div>
<div class="t" style="left:6.73px;width:14.53px;top:460.15px;font-size:14px;line-height:14px;color:#e6e6e6;font-weight:400;">11</div>
<div style="left:0px;top:496px;width:28px;height:1px;background:#b4b4b4;"></div>
<div class="t" style="left:6.21px;width:15.57px;top:480.15px;font-size:14px;line-height:14px;color:#e6e6e6;font-weight:400;">12</div>
<div style="left:0px;top:516px;width:28px;height:1px;background:#b4b4b4;"></div>
<div class="t" style="left:6.21px;width:15.57px;top:500.15px;font-size:14px;line-height:14px;color:#e6e6e6;font-weight:400;">13</div>
<div style="left:0px;top:536px;width:28px;height:1px;background:#b4b4b4;"></div>
<div class="t" style="left:6.21px;width:15.57px;top:520.15px;font-size:14px;line-height:14px;color:#e6e6e6;font-weight:400;">14</div>
<div style="left:0px;top:556px;width:28px;height:1px;background:#b4b4b4;"></div>
<div class="t" style="left:6.21px;width:15.57px;top:540.15px;font-size:14px;line-height:14px;color:#e6e6e6;font-weight:400;">15</div>
<div style="left:0px;top:576px;width:28px;height:1px;background:#b4b4b4;"></div>
<div class="t" style="left:6.21px;width:15.57px;top:560.15px;font-size:14px;line-height:14px;color:#e6e6e6;font-weight:400;">16</div>
<div style="left:0px;top:596px;width:28px;height:1px;background:#b4b4b4;"></div>
<div class="t" style="left:6.21px;width:15.57px;top:580.15px;font-size:14px;line-height:14px;color:#e6e6e6;font-weight:400;">17</div>
<div style="left:0px;top:616px;width:28px;height:1px;background:#b4b4b4;"></div>
<div class="t" style="left:6.21px;width:15.57px;top:600.15px;font-size:14px;line-height:14px;color:#e6e6e6;font-weight:400;">18</div>
<div style="left:0px;top:636px;width:28px;height:1px;background:#b4b4b4;"></div>
<div class="t" style="left:6.21px;width:15.57px;top:620.15px;font-size:14px;line-height:14px;color:#e6e6e6;font-weight:400;">19</div>
<div style="left:0px;top:656px;width:28px;height:1px;background:#b4b4b4;"></div>
<div class="t" style="left:6.21px;width:15.57px;top:640.15px;font-size:14px;line-height:14px;color:#e6e6e6;font-weight:400;">20</div>
<div style="left:0px;top:676px;width:28px;height:1px;background:#b4b4b4;"></div>
<div class="t" style="left:6.21px;width:15.57px;top:660.15px;font-size:14px;line-height:14px;color:#e6e6e6;font-weight:400;">21</div>
<div style="left:0px;top:696px;width:28px;height:1px;background:#b4b4b4;"></div>
<div class="t" style="left:6.21px;width:15.57px;top:680.15px;font-size:14px;line-height:14px;color:#e6e6e6;font-weight:400;">22</div>
<div style="left:0px;top:716px;width:28px;height:1px;background:#b4b4b4;"></div>
<div class="t" style="left:6.21px;width:15.57px;top:700.15px;font-size:14px;line-height:14px;color:#e6e6e6;font-weight:400;">23</div>
<div style="left:0px;top:736px;width:28px;height:1px;background:#b4b4b4;"></div>
<div class="t" style="left:6.21px;width:15.57px;top:720.15px;font-size:14px;line-height:14px;color:#e6e6e6;font-weight:400;">24</div>
<div style="left:0px;top:756px;width:28px;height:1px;background:#b4b4b4;"></div>
<div class="t" style="left:6.21px;width:15.57px;top:740.15px;font-size:14px;line-height:14px;color:#e6e6e6;font-weight:400;">25</div>
<div style="left:0px;top:776px;width:28px;height:1px;background:#b4b4b4;"></div>
<div class="t" style="left:6.21px;width:15.57px;top:760.15px;font-size:14px;line-height:14px;color:#e6e6e6;font-weight:400;">26</div>
<div style="left:0px;top:796px;width:28px;height:1px;background:#b4b4b4;"></div>
<div class="t" style="left:6.21px;width:15.57px;top:780.15px;font-size:14px;line-height:14px;color:#e6e6e6;font-weight:400;">27</div>
<div style="left:0px;top:816px;width:28px;height:1px;background:#b4b4b4;"></div>
<div class="t" style="left:6.21px;width:15.57px;top:800.15px;font-size:14px;line-height:14px;color:#e6e6e6;font-weight:400;">28</div>
<div style="left:0px;top:836px;width:28px;height:1px;background:#b4b4b4;"></div>
<div class="t" style="left:6.21px;width:15.57px;top:820.15px;font-size:14px;line-height:14px;color:#e6e6e6;font-weight:400;">29</div>
<div style="left:0px;top:856px;width:28px;height:1px;background:#b4b4b4;"></div>
<div class="t" style="left:6.21px;width:15.57px;top:840.15px;font-size:14px;line-height:14px;color:#e6e6e6;font-weight:400;">30</div>
<div style="left:0px;top:876px;width:28px;height:1px;background:#b4b4b4;"></div>
<div class="t" style="left:6.21px;width:15.57px;top:860.15px;font-size:14px;line-height:14px;color:#e6e6e6;font-weight:400;">31</div>
<div style="left:0px;top:896px;width:28px;height:1px;background:#b4b4b4;"></div>
<div class="t" style="left:6.21px;width:15.57px;top:880.15px;font-size:14px;line-height:14px;color:#e6e6e6;font-weight:400;">32</div>
<div style="left:28px;top:236px;width:1px;height:661px;background:#8a8a8a;"></div>
<div style="left:29px;top:236px;width:1779px;height:662px;background:#ffffff;"></div>
<div style="left:29px;top:276px;width:1865px;height:1px;background:#a6a6a6;"></div>
<div style="left:1808px;top:236px;width:86px;height:661px;background:#2d2d2d;"></div>
<div style="left:1894px;top:236px;width:1px;height:662px;background:#4e4e4e;"></div>
<div style="left:0px;top:898px;width:1895px;height:1px;background:#3a3a3a;"></div>
<div style="left:0px;top:897px;width:28px;height:1px;background:#b4b4b4;"></div>
<div style="left:29px;top:236px;width:55px;height:40px;background:#003161;"></div>
<div class="t" style="left:31px;top:249.15px;font-size:14px;line-height:14px;color:#ffffff;font-weight:700;transform:scaleX(0.9950);transform-origin:left 0;">Mês</div>
<div style="left:85px;top:236px;width:114px;height:40px;background:#003161;"></div>
<div class="t" style="left:87px;top:239.15px;font-size:14px;line-height:14px;color:#ffffff;font-weight:700;transform:scaleX(1.0150);transform-origin:left 0;">Saldo Dev.</div>
<div class="t" style="left:87px;top:259.15px;font-size:14px;line-height:14px;color:#ffffff;font-weight:700;transform:scaleX(0.9929);transform-origin:left 0;">Inicial</div>
<div style="left:200px;top:236px;width:114px;height:40px;background:#003161;"></div>
<div class="t" style="left:202px;top:249.15px;font-size:14px;line-height:14px;color:#ffffff;font-weight:700;transform:scaleX(0.9180);transform-origin:left 0;">Juros</div>
<div style="left:315px;top:236px;width:114px;height:40px;background:#003161;"></div>
<div class="t" style="left:317px;top:239.15px;font-size:14px;line-height:14px;color:#ffffff;font-weight:700;transform:scaleX(0.9387);transform-origin:left 0;">PGTO</div>
<div class="t" style="left:317px;top:259.15px;font-size:14px;line-height:14px;color:#ffffff;font-weight:700;transform:scaleX(0.9775);transform-origin:left 0;">Parcela</div>
<div style="left:430px;top:236px;width:114px;height:40px;background:#003161;"></div>
<div class="t" style="left:432px;top:239.15px;font-size:14px;line-height:14px;color:#ffffff;font-weight:700;transform:scaleX(0.9387);transform-origin:left 0;">PGTO</div>
<div class="t" style="left:432px;top:259.15px;font-size:14px;line-height:14px;color:#ffffff;font-weight:700;transform:scaleX(0.9411);transform-origin:left 0;">Custos Extras</div>
<div style="left:545px;top:236px;width:114px;height:40px;background:#003161;"></div>
<div class="t" style="left:547px;top:239.15px;font-size:14px;line-height:14px;color:#ffffff;font-weight:700;transform:scaleX(0.9387);transform-origin:left 0;">PGTO</div>
<div class="t" style="left:547px;top:259.15px;font-size:14px;line-height:14px;color:#ffffff;font-weight:700;transform:scaleX(1.0462);transform-origin:left 0;">Total</div>
<div style="left:660px;top:236px;width:114px;height:40px;background:#003161;"></div>
<div class="t" style="left:662px;top:239.15px;font-size:14px;line-height:14px;color:#ffffff;font-weight:700;transform:scaleX(1.0150);transform-origin:left 0;">Saldo Dev.</div>
<div class="t" style="left:662px;top:259.15px;font-size:14px;line-height:14px;color:#ffffff;font-weight:700;transform:scaleX(0.9581);transform-origin:left 0;">Final</div>
<div style="left:775px;top:236px;width:114px;height:40px;background:#003161;"></div>
<div class="t" style="left:777px;top:239.15px;font-size:14px;line-height:14px;color:#ffffff;font-weight:700;transform:scaleX(0.9929);transform-origin:left 0;">Antigo PGTO</div>
<div class="t" style="left:777px;top:259.15px;font-size:14px;line-height:14px;color:#ffffff;font-weight:700;transform:scaleX(0.9775);transform-origin:left 0;">Parcela</div>
<div style="left:890px;top:236px;width:88px;height:40px;background:#003161;"></div>
<div class="t" style="left:892px;top:239.15px;font-size:14px;line-height:14px;color:#ffffff;font-weight:700;transform:scaleX(1.0334);transform-origin:left 0;">Antigo Qtd.</div>
<div class="t" style="left:892px;top:259.15px;font-size:14px;line-height:14px;color:#ffffff;font-weight:700;transform:scaleX(0.9547);transform-origin:left 0;">Parcelas</div>
<div style="left:979px;top:236px;width:114px;height:40px;background:#1a7f47;"></div>
<div class="t" style="left:981px;top:239.15px;font-size:14px;line-height:14px;color:#ffffff;font-weight:700;transform:scaleX(1.0102);transform-origin:left 0;">Valor Extra</div>
<div class="t" style="left:981px;top:259.15px;font-size:14px;line-height:14px;color:#ffffff;font-weight:700;transform:scaleX(1.0388);transform-origin:left 0;">Informado</div>
<div style="left:1094px;top:236px;width:94px;height:40px;background:#1a7f47;"></div>
<div class="t" style="left:1096px;top:239.15px;font-size:14px;line-height:14px;color:#ffffff;font-weight:700;transform:scaleX(1.0077);transform-origin:left 0;">Tipo de</div>
<div class="t" style="left:1096px;top:259.15px;font-size:14px;line-height:14px;color:#ffffff;font-weight:700;transform:scaleX(1.0105);transform-origin:left 0;">Amortização</div>
<div style="left:1189px;top:236px;width:114px;height:40px;background:#003161;"></div>
<div class="t" style="left:1191px;top:239.15px;font-size:14px;line-height:14px;color:#ffffff;font-weight:700;transform:scaleX(1.0184);transform-origin:left 0;">Valor Extra de</div>
<div class="t" style="left:1191px;top:259.15px;font-size:14px;line-height:14px;color:#ffffff;font-weight:700;transform:scaleX(0.9512);transform-origin:left 0;">Cálculo</div>
<div style="left:1304px;top:236px;width:114px;height:40px;background:#003161;"></div>
<div class="t" style="left:1306px;top:239.15px;font-size:14px;line-height:14px;color:#ffffff;font-weight:700;transform:scaleX(1.0100);transform-origin:left 0;">PGTO Total -</div>
<div class="t" style="left:1306px;top:259.15px;font-size:14px;line-height:14px;color:#ffffff;font-weight:700;transform:scaleX(0.9896);transform-origin:left 0;">Mês + Extra</div>
<div style="left:1419px;top:236px;width:114px;height:40px;background:#003161;"></div>
<div class="t" style="left:1421px;top:239.15px;font-size:14px;line-height:14px;color:#ffffff;font-weight:700;transform:scaleX(1.0150);transform-origin:left 0;">Saldo Dev.</div>
<div class="t" style="left:1421px;top:259.15px;font-size:14px;line-height:14px;color:#ffffff;font-weight:700;transform:scaleX(1.0178);transform-origin:left 0;">Final - c/ Extra</div>
<div style="left:1534px;top:236px;width:114px;height:40px;background:#003161;"></div>
<div class="t" style="left:1536px;top:239.15px;font-size:14px;line-height:14px;color:#ffffff;font-weight:700;transform:scaleX(0.9974);transform-origin:left 0;">Novo PGTO</div>
<div class="t" style="left:1536px;top:259.15px;font-size:14px;line-height:14px;color:#ffffff;font-weight:700;transform:scaleX(0.9775);transform-origin:left 0;">Parcela</div>
<div style="left:1649px;top:236px;width:88px;height:40px;background:#003161;"></div>
<div class="t" style="left:1651px;top:239.15px;font-size:14px;line-height:14px;color:#ffffff;font-weight:700;transform:scaleX(1.0526);transform-origin:left 0;">Novo Qtd.</div>
<div class="t" style="left:1651px;top:259.15px;font-size:14px;line-height:14px;color:#ffffff;font-weight:700;transform:scaleX(0.9547);transform-origin:left 0;">Parcelas</div>
<div style="left:1738px;top:236px;width:70px;height:40px;background:#ffc000;"></div>
<div class="t" style="left:1740px;top:249.15px;font-size:14px;line-height:14px;color:#ffffff;font-weight:700;transform:scaleX(1.0162);transform-origin:left 0;">Apoio</div>
<div style="left:29px;top:277px;width:55px;height:19px;background:#bfbfbf;"></div>
<div class="t" style="right:1838.5px;top:280.15px;font-size:14px;line-height:14px;color:#000000;font-weight:400;">1</div>
<div style="left:85px;top:277px;width:114px;height:19px;background:#f2f2f2;"></div>
<div class="t" style="right:1723.5px;top:280.15px;font-size:14px;line-height:14px;color:#000000;font-weight:400;">R$ 300.000,00</div>
<div style="left:200px;top:277px;width:114px;height:19px;background:#f2f2f2;"></div>
<div class="t" style="right:1608.5px;top:280.15px;font-size:14px;line-height:14px;color:#000000;font-weight:400;">R$ 2.208,36</div>
<div style="left:315px;top:277px;width:114px;height:19px;background:#f2f2f2;"></div>
<div class="t" style="right:1493.5px;top:280.15px;font-size:14px;line-height:14px;color:#000000;font-weight:400;">R$ 2.378,00</div>
<div style="left:430px;top:277px;width:114px;height:19px;background:#f2f2f2;"></div>
<div class="t" style="right:1378.5px;top:280.15px;font-size:14px;line-height:14px;color:#000000;font-weight:400;">R$ 90,00</div>
<div style="left:545px;top:277px;width:114px;height:19px;background:#f2f2f2;"></div>
<div class="t" style="right:1263.5px;top:280.15px;font-size:14px;line-height:14px;color:#000000;font-weight:400;">R$ 2.468,00</div>
<div style="left:660px;top:277px;width:114px;height:19px;background:#f2f2f2;"></div>
<div class="t" style="right:1148.5px;top:280.15px;font-size:14px;line-height:14px;color:#000000;font-weight:400;">R$ 299.830,36</div>
<div style="left:775px;top:277px;width:114px;height:19px;background:#f2f2f2;"></div>
<div class="t" style="right:1033.5px;top:280.15px;font-size:14px;line-height:14px;color:#000000;font-weight:400;">R$ 2.378,00</div>
<div style="left:890px;top:277px;width:88px;height:19px;background:#f2f2f2;"></div>
<div class="t" style="right:944.5px;top:280.15px;font-size:14px;line-height:14px;color:#000000;font-weight:400;">359,0</div>
<div style="left:979px;top:277px;width:114px;height:19px;background:#c6e0b4;"></div>
<div style="left:1094px;top:277px;width:94px;height:19px;background:#c6e0b4;"></div>
<div style="left:1189px;top:277px;width:114px;height:19px;background:#f2f2f2;"></div>
<div class="t" style="right:619.5px;top:280.15px;font-size:14px;line-height:14px;color:#000000;font-weight:400;">R$ 0,00</div>
<div style="left:1304px;top:277px;width:114px;height:19px;background:#f2f2f2;"></div>
<div class="t" style="right:504.5px;top:280.15px;font-size:14px;line-height:14px;color:#000000;font-weight:400;">R$ 2.468,00</div>
<div style="left:1419px;top:277px;width:114px;height:19px;background:#f2f2f2;"></div>
<div class="t" style="right:389.5px;top:280.15px;font-size:14px;line-height:14px;color:#000000;font-weight:400;">R$ 299.830,36</div>
<div style="left:1534px;top:277px;width:114px;height:19px;background:#f2f2f2;"></div>
<div class="t" style="right:274.5px;top:280.15px;font-size:14px;line-height:14px;color:#000000;font-weight:400;">R$ 2.378,00</div>
<div style="left:1649px;top:277px;width:88px;height:19px;background:#f2f2f2;"></div>
<div class="t" style="right:185.5px;top:280.15px;font-size:14px;line-height:14px;color:#000000;font-weight:400;">359,0</div>
<div style="left:1738px;top:277px;width:70px;height:19px;background:#f2f2f2;"></div>
<div class="t" style="right:115px;top:280.15px;font-size:14px;line-height:14px;color:#000000;font-weight:400;">1</div>
<div style="left:29px;top:297px;width:55px;height:19px;background:#bfbfbf;"></div>
<div class="t" style="right:1838.5px;top:300.15px;font-size:14px;line-height:14px;color:#000000;font-weight:400;">2</div>
<div style="left:85px;top:297px;width:114px;height:19px;background:#f2f2f2;"></div>
<div class="t" style="right:1723.5px;top:300.15px;font-size:14px;line-height:14px;color:#000000;font-weight:400;">R$ 299.830,36</div>
<div style="left:200px;top:297px;width:114px;height:19px;background:#f2f2f2;"></div>
<div class="t" style="right:1608.5px;top:300.15px;font-size:14px;line-height:14px;color:#000000;font-weight:400;">R$ 2.207,11</div>
<div style="left:315px;top:297px;width:114px;height:19px;background:#f2f2f2;"></div>
<div class="t" style="right:1493.5px;top:300.15px;font-size:14px;line-height:14px;color:#000000;font-weight:400;">R$ 2.378,00</div>
<div style="left:430px;top:297px;width:114px;height:19px;background:#f2f2f2;"></div>
<div class="t" style="right:1378.5px;top:300.15px;font-size:14px;line-height:14px;color:#000000;font-weight:400;">R$ 90,00</div>
<div style="left:545px;top:297px;width:114px;height:19px;background:#f2f2f2;"></div>
<div class="t" style="right:1263.5px;top:300.15px;font-size:14px;line-height:14px;color:#000000;font-weight:400;">R$ 2.468,00</div>
<div style="left:660px;top:297px;width:114px;height:19px;background:#f2f2f2;"></div>
<div class="t" style="right:1148.5px;top:300.15px;font-size:14px;line-height:14px;color:#000000;font-weight:400;">R$ 299.659,47</div>
<div style="left:775px;top:297px;width:114px;height:19px;background:#f2f2f2;"></div>
<div class="t" style="right:1033.5px;top:300.15px;font-size:14px;line-height:14px;color:#000000;font-weight:400;">R$ 2.378,00</div>
<div style="left:890px;top:297px;width:88px;height:19px;background:#f2f2f2;"></div>
<div class="t" style="right:944.5px;top:300.15px;font-size:14px;line-height:14px;color:#000000;font-weight:400;">358,0</div>
<div style="left:979px;top:297px;width:114px;height:19px;background:#c6e0b4;"></div>
<div style="left:1094px;top:297px;width:94px;height:19px;background:#c6e0b4;"></div>
<div style="left:1189px;top:297px;width:114px;height:19px;background:#f2f2f2;"></div>
<div class="t" style="right:619.5px;top:300.15px;font-size:14px;line-height:14px;color:#000000;font-weight:400;">R$ 0,00</div>
<div style="left:1304px;top:297px;width:114px;height:19px;background:#f2f2f2;"></div>
<div class="t" style="right:504.5px;top:300.15px;font-size:14px;line-height:14px;color:#000000;font-weight:400;">R$ 2.468,00</div>
<div style="left:1419px;top:297px;width:114px;height:19px;background:#f2f2f2;"></div>
<div class="t" style="right:389.5px;top:300.15px;font-size:14px;line-height:14px;color:#000000;font-weight:400;">R$ 299.659,47</div>
<div style="left:1534px;top:297px;width:114px;height:19px;background:#f2f2f2;"></div>
<div class="t" style="right:274.5px;top:300.15px;font-size:14px;line-height:14px;color:#000000;font-weight:400;">R$ 2.378,00</div>
<div style="left:1649px;top:297px;width:88px;height:19px;background:#f2f2f2;"></div>
<div class="t" style="right:185.5px;top:300.15px;font-size:14px;line-height:14px;color:#000000;font-weight:400;">358,0</div>
<div style="left:1738px;top:297px;width:70px;height:19px;background:#f2f2f2;"></div>
<div class="t" style="right:115px;top:300.15px;font-size:14px;line-height:14px;color:#000000;font-weight:400;">1</div>
<div style="left:29px;top:317px;width:55px;height:19px;background:#bfbfbf;"></div>
<div class="t" style="right:1838.5px;top:320.15px;font-size:14px;line-height:14px;color:#000000;font-weight:400;">3</div>
<div style="left:85px;top:317px;width:114px;height:19px;background:#f2f2f2;"></div>
<div class="t" style="right:1723.5px;top:320.15px;font-size:14px;line-height:14px;color:#000000;font-weight:400;">R$ 299.659,47</div>
<div style="left:200px;top:317px;width:114px;height:19px;background:#f2f2f2;"></div>
<div class="t" style="right:1608.5px;top:320.15px;font-size:14px;line-height:14px;color:#000000;font-weight:400;">R$ 2.205,85</div>
<div style="left:315px;top:317px;width:114px;height:19px;background:#f2f2f2;"></div>
<div class="t" style="right:1493.5px;top:320.15px;font-size:14px;line-height:14px;color:#000000;font-weight:400;">R$ 2.378,00</div>
<div style="left:430px;top:317px;width:114px;height:19px;background:#f2f2f2;"></div>
<div class="t" style="right:1378.5px;top:320.15px;font-size:14px;line-height:14px;color:#000000;font-weight:400;">R$ 90,00</div>
<div style="left:545px;top:317px;width:114px;height:19px;background:#f2f2f2;"></div>
<div class="t" style="right:1263.5px;top:320.15px;font-size:14px;line-height:14px;color:#000000;font-weight:400;">R$ 2.468,00</div>
<div style="left:660px;top:317px;width:114px;height:19px;background:#f2f2f2;"></div>
<div class="t" style="right:1148.5px;top:320.15px;font-size:14px;line-height:14px;color:#000000;font-weight:400;">R$ 299.487,32</div>
<div style="left:775px;top:317px;width:114px;height:19px;background:#f2f2f2;"></div>
<div class="t" style="right:1033.5px;top:320.15px;font-size:14px;line-height:14px;color:#000000;font-weight:400;">R$ 2.378,00</div>
<div style="left:890px;top:317px;width:88px;height:19px;background:#f2f2f2;"></div>
<div class="t" style="right:944.5px;top:320.15px;font-size:14px;line-height:14px;color:#000000;font-weight:400;">357,0</div>
<div style="left:979px;top:317px;width:114px;height:19px;background:#c6e0b4;"></div>
<div style="left:1094px;top:317px;width:94px;height:19px;background:#c6e0b4;"></div>
<div style="left:1189px;top:317px;width:114px;height:19px;background:#f2f2f2;"></div>
<div class="t" style="right:619.5px;top:320.15px;font-size:14px;line-height:14px;color:#000000;font-weight:400;">R$ 0,00</div>
<div style="left:1304px;top:317px;width:114px;height:19px;background:#f2f2f2;"></div>
<div class="t" style="right:504.5px;top:320.15px;font-size:14px;line-height:14px;color:#000000;font-weight:400;">R$ 2.468,00</div>
<div style="left:1419px;top:317px;width:114px;height:19px;background:#f2f2f2;"></div>
<div class="t" style="right:389.5px;top:320.15px;font-size:14px;line-height:14px;color:#000000;font-weight:400;">R$ 299.487,32</div>
<div style="left:1534px;top:317px;width:114px;height:19px;background:#f2f2f2;"></div>
<div class="t" style="right:274.5px;top:320.15px;font-size:14px;line-height:14px;color:#000000;font-weight:400;">R$ 2.378,00</div>
<div style="left:1649px;top:317px;width:88px;height:19px;background:#f2f2f2;"></div>
<div class="t" style="right:185.5px;top:320.15px;font-size:14px;line-height:14px;color:#000000;font-weight:400;">357,0</div>
<div style="left:1738px;top:317px;width:70px;height:19px;background:#f2f2f2;"></div>
<div class="t" style="right:115px;top:320.15px;font-size:14px;line-height:14px;color:#000000;font-weight:400;">1</div>
<div style="left:29px;top:337px;width:55px;height:19px;background:#bfbfbf;"></div>
<div class="t" style="right:1838.5px;top:340.15px;font-size:14px;line-height:14px;color:#000000;font-weight:400;">4</div>
<div style="left:85px;top:337px;width:114px;height:19px;background:#f2f2f2;"></div>
<div class="t" style="right:1723.5px;top:340.15px;font-size:14px;line-height:14px;color:#000000;font-weight:400;">R$ 299.487,32</div>
<div style="left:200px;top:337px;width:114px;height:19px;background:#f2f2f2;"></div>
<div class="t" style="right:1608.5px;top:340.15px;font-size:14px;line-height:14px;color:#000000;font-weight:400;">R$ 2.204,59</div>
<div style="left:315px;top:337px;width:114px;height:19px;background:#f2f2f2;"></div>
<div class="t" style="right:1493.5px;top:340.15px;font-size:14px;line-height:14px;color:#000000;font-weight:400;">R$ 2.378,00</div>
<div style="left:430px;top:337px;width:114px;height:19px;background:#f2f2f2;"></div>
<div class="t" style="right:1378.5px;top:340.15px;font-size:14px;line-height:14px;color:#000000;font-weight:400;">R$ 90,00</div>
<div style="left:545px;top:337px;width:114px;height:19px;background:#f2f2f2;"></div>
<div class="t" style="right:1263.5px;top:340.15px;font-size:14px;line-height:14px;color:#000000;font-weight:400;">R$ 2.468,00</div>
<div style="left:660px;top:337px;width:114px;height:19px;background:#f2f2f2;"></div>
<div class="t" style="right:1148.5px;top:340.15px;font-size:14px;line-height:14px;color:#000000;font-weight:400;">R$ 299.313,90</div>
<div style="left:775px;top:337px;width:114px;height:19px;background:#f2f2f2;"></div>
<div class="t" style="right:1033.5px;top:340.15px;font-size:14px;line-height:14px;color:#000000;font-weight:400;">R$ 2.378,00</div>
<div style="left:890px;top:337px;width:88px;height:19px;background:#f2f2f2;"></div>
<div class="t" style="right:944.5px;top:340.15px;font-size:14px;line-height:14px;color:#000000;font-weight:400;">356,0</div>
<div style="left:979px;top:337px;width:114px;height:19px;background:#c6e0b4;"></div>
<div style="left:1094px;top:337px;width:94px;height:19px;background:#c6e0b4;"></div>
<div style="left:1189px;top:337px;width:114px;height:19px;background:#f2f2f2;"></div>
<div class="t" style="right:619.5px;top:340.15px;font-size:14px;line-height:14px;color:#000000;font-weight:400;">R$ 0,00</div>
<div style="left:1304px;top:337px;width:114px;height:19px;background:#f2f2f2;"></div>
<div class="t" style="right:504.5px;top:340.15px;font-size:14px;line-height:14px;color:#000000;font-weight:400;">R$ 2.468,00</div>
<div style="left:1419px;top:337px;width:114px;height:19px;background:#f2f2f2;"></div>
<div class="t" style="right:389.5px;top:340.15px;font-size:14px;line-height:14px;color:#000000;font-weight:400;">R$ 299.313,90</div>
<div style="left:1534px;top:337px;width:114px;height:19px;background:#f2f2f2;"></div>
<div class="t" style="right:274.5px;top:340.15px;font-size:14px;line-height:14px;color:#000000;font-weight:400;">R$ 2.378,00</div>
<div style="left:1649px;top:337px;width:88px;height:19px;background:#f2f2f2;"></div>
<div class="t" style="right:185.5px;top:340.15px;font-size:14px;line-height:14px;color:#000000;font-weight:400;">356,0</div>
<div style="left:1738px;top:337px;width:70px;height:19px;background:#f2f2f2;"></div>
<div class="t" style="right:115px;top:340.15px;font-size:14px;line-height:14px;color:#000000;font-weight:400;">1</div>
<div style="left:29px;top:357px;width:55px;height:19px;background:#bfbfbf;"></div>
<div class="t" style="right:1838.5px;top:360.15px;font-size:14px;line-height:14px;color:#000000;font-weight:400;">5</div>
<div style="left:85px;top:357px;width:114px;height:19px;background:#f2f2f2;"></div>
<div class="t" style="right:1723.5px;top:360.15px;font-size:14px;line-height:14px;color:#000000;font-weight:400;">R$ 299.313,90</div>
<div style="left:200px;top:357px;width:114px;height:19px;background:#f2f2f2;"></div>
<div class="t" style="right:1608.5px;top:360.15px;font-size:14px;line-height:14px;color:#000000;font-weight:400;">R$ 2.203,31</div>
<div style="left:315px;top:357px;width:114px;height:19px;background:#f2f2f2;"></div>
<div class="t" style="right:1493.5px;top:360.15px;font-size:14px;line-height:14px;color:#000000;font-weight:400;">R$ 2.378,00</div>
<div style="left:430px;top:357px;width:114px;height:19px;background:#f2f2f2;"></div>
<div class="t" style="right:1378.5px;top:360.15px;font-size:14px;line-height:14px;color:#000000;font-weight:400;">R$ 90,00</div>
<div style="left:545px;top:357px;width:114px;height:19px;background:#f2f2f2;"></div>
<div class="t" style="right:1263.5px;top:360.15px;font-size:14px;line-height:14px;color:#000000;font-weight:400;">R$ 2.468,00</div>
<div style="left:660px;top:357px;width:114px;height:19px;background:#f2f2f2;"></div>
<div class="t" style="right:1148.5px;top:360.15px;font-size:14px;line-height:14px;color:#000000;font-weight:400;">R$ 299.139,21</div>
<div style="left:775px;top:357px;width:114px;height:19px;background:#f2f2f2;"></div>
<div class="t" style="right:1033.5px;top:360.15px;font-size:14px;line-height:14px;color:#000000;font-weight:400;">R$ 2.378,00</div>
<div style="left:890px;top:357px;width:88px;height:19px;background:#f2f2f2;"></div>
<div class="t" style="right:944.5px;top:360.15px;font-size:14px;line-height:14px;color:#000000;font-weight:400;">355,0</div>
<div style="left:979px;top:357px;width:114px;height:19px;background:#c6e0b4;"></div>
<div style="left:1094px;top:357px;width:94px;height:19px;background:#c6e0b4;"></div>
<div style="left:1189px;top:357px;width:114px;height:19px;background:#f2f2f2;"></div>
<div class="t" style="right:619.5px;top:360.15px;font-size:14px;line-height:14px;color:#000000;font-weight:400;">R$ 0,00</div>
<div style="left:1304px;top:357px;width:114px;height:19px;background:#f2f2f2;"></div>
<div class="t" style="right:504.5px;top:360.15px;font-size:14px;line-height:14px;color:#000000;font-weight:400;">R$ 2.468,00</div>
<div style="left:1419px;top:357px;width:114px;height:19px;background:#f2f2f2;"></div>
<div class="t" style="right:389.5px;top:360.15px;font-size:14px;line-height:14px;color:#000000;font-weight:400;">R$ 299.139,21</div>
<div style="left:1534px;top:357px;width:114px;height:19px;background:#f2f2f2;"></div>
<div class="t" style="right:274.5px;top:360.15px;font-size:14px;line-height:14px;color:#000000;font-weight:400;">R$ 2.378,00</div>
<div style="left:1649px;top:357px;width:88px;height:19px;background:#f2f2f2;"></div>
<div class="t" style="right:185.5px;top:360.15px;font-size:14px;line-height:14px;color:#000000;font-weight:400;">355,0</div>
<div style="left:1738px;top:357px;width:70px;height:19px;background:#f2f2f2;"></div>
<div class="t" style="right:115px;top:360.15px;font-size:14px;line-height:14px;color:#000000;font-weight:400;">1</div>
<div style="left:29px;top:377px;width:55px;height:19px;background:#bfbfbf;"></div>
<div class="t" style="right:1838.5px;top:380.15px;font-size:14px;line-height:14px;color:#000000;font-weight:400;">6</div>
<div style="left:85px;top:377px;width:114px;height:19px;background:#f2f2f2;"></div>
<div class="t" style="right:1723.5px;top:380.15px;font-size:14px;line-height:14px;color:#000000;font-weight:400;">R$ 299.139,21</div>
<div style="left:200px;top:377px;width:114px;height:19px;background:#f2f2f2;"></div>
<div class="t" style="right:1608.5px;top:380.15px;font-size:14px;line-height:14px;color:#000000;font-weight:400;">R$ 2.202,02</div>
<div style="left:315px;top:377px;width:114px;height:19px;background:#f2f2f2;"></div>
<div class="t" style="right:1493.5px;top:380.15px;font-size:14px;line-height:14px;color:#000000;font-weight:400;">R$ 2.378,00</div>
<div style="left:430px;top:377px;width:114px;height:19px;background:#f2f2f2;"></div>
<div class="t" style="right:1378.5px;top:380.15px;font-size:14px;line-height:14px;color:#000000;font-weight:400;">R$ 90,00</div>
<div style="left:545px;top:377px;width:114px;height:19px;background:#f2f2f2;"></div>
<div class="t" style="right:1263.5px;top:380.15px;font-size:14px;line-height:14px;color:#000000;font-weight:400;">R$ 2.468,00</div>
<div style="left:660px;top:377px;width:114px;height:19px;background:#f2f2f2;"></div>
<div class="t" style="right:1148.5px;top:380.15px;font-size:14px;line-height:14px;color:#000000;font-weight:400;">R$ 298.963,23</div>
<div style="left:775px;top:377px;width:114px;height:19px;background:#f2f2f2;"></div>
<div class="t" style="right:1033.5px;top:380.15px;font-size:14px;line-height:14px;color:#000000;font-weight:400;">R$ 2.378,00</div>
<div style="left:890px;top:377px;width:88px;height:19px;background:#f2f2f2;"></div>
<div class="t" style="right:944.5px;top:380.15px;font-size:14px;line-height:14px;color:#000000;font-weight:400;">354,0</div>
<div style="left:979px;top:377px;width:114px;height:19px;background:#c6e0b4;"></div>
<div style="left:1094px;top:377px;width:94px;height:19px;background:#c6e0b4;"></div>
<div style="left:1189px;top:377px;width:114px;height:19px;background:#f2f2f2;"></div>
<div class="t" style="right:619.5px;top:380.15px;font-size:14px;line-height:14px;color:#000000;font-weight:400;">R$ 0,00</div>
<div style="left:1304px;top:377px;width:114px;height:19px;background:#f2f2f2;"></div>
<div class="t" style="right:504.5px;top:380.15px;font-size:14px;line-height:14px;color:#000000;font-weight:400;">R$ 2.468,00</div>
<div style="left:1419px;top:377px;width:114px;height:19px;background:#f2f2f2;"></div>
<div class="t" style="right:389.5px;top:380.15px;font-size:14px;line-height:14px;color:#000000;font-weight:400;">R$ 298.963,23</div>
<div style="left:1534px;top:377px;width:114px;height:19px;background:#f2f2f2;"></div>
<div class="t" style="right:274.5px;top:380.15px;font-size:14px;line-height:14px;color:#000000;font-weight:400;">R$ 2.378,00</div>
<div style="left:1649px;top:377px;width:88px;height:19px;background:#f2f2f2;"></div>
<div class="t" style="right:185.5px;top:380.15px;font-size:14px;line-height:14px;color:#000000;font-weight:400;">354,0</div>
<div style="left:1738px;top:377px;width:70px;height:19px;background:#f2f2f2;"></div>
<div class="t" style="right:115px;top:380.15px;font-size:14px;line-height:14px;color:#000000;font-weight:400;">1</div>
<div style="left:29px;top:397px;width:55px;height:19px;background:#bfbfbf;"></div>
<div class="t" style="right:1838.5px;top:400.15px;font-size:14px;line-height:14px;color:#000000;font-weight:400;">7</div>
<div style="left:85px;top:397px;width:114px;height:19px;background:#f2f2f2;"></div>
<div class="t" style="right:1723.5px;top:400.15px;font-size:14px;line-height:14px;color:#000000;font-weight:400;">R$ 298.963,23</div>
<div style="left:200px;top:397px;width:114px;height:19px;background:#f2f2f2;"></div>
<div class="t" style="right:1608.5px;top:400.15px;font-size:14px;line-height:14px;color:#000000;font-weight:400;">R$ 2.200,73</div>
<div style="left:315px;top:397px;width:114px;height:19px;background:#f2f2f2;"></div>
<div class="t" style="right:1493.5px;top:400.15px;font-size:14px;line-height:14px;color:#000000;font-weight:400;">R$ 2.378,00</div>
<div style="left:430px;top:397px;width:114px;height:19px;background:#f2f2f2;"></div>
<div class="t" style="right:1378.5px;top:400.15px;font-size:14px;line-height:14px;color:#000000;font-weight:400;">R$ 90,00</div>
<div style="left:545px;top:397px;width:114px;height:19px;background:#f2f2f2;"></div>
<div class="t" style="right:1263.5px;top:400.15px;font-size:14px;line-height:14px;color:#000000;font-weight:400;">R$ 2.468,00</div>
<div style="left:660px;top:397px;width:114px;height:19px;background:#f2f2f2;"></div>
<div class="t" style="right:1148.5px;top:400.15px;font-size:14px;line-height:14px;color:#000000;font-weight:400;">R$ 298.785,96</div>
<div style="left:775px;top:397px;width:114px;height:19px;background:#f2f2f2;"></div>
<div class="t" style="right:1033.5px;top:400.15px;font-size:14px;line-height:14px;color:#000000;font-weight:400;">R$ 2.378,00</div>
<div style="left:890px;top:397px;width:88px;height:19px;background:#f2f2f2;"></div>
<div class="t" style="right:944.5px;top:400.15px;font-size:14px;line-height:14px;color:#000000;font-weight:400;">353,0</div>
<div style="left:979px;top:397px;width:114px;height:19px;background:#c6e0b4;"></div>
<div style="left:1094px;top:397px;width:94px;height:19px;background:#c6e0b4;"></div>
<div style="left:1189px;top:397px;width:114px;height:19px;background:#f2f2f2;"></div>
<div class="t" style="right:619.5px;top:400.15px;font-size:14px;line-height:14px;color:#000000;font-weight:400;">R$ 0,00</div>
<div style="left:1304px;top:397px;width:114px;height:19px;background:#f2f2f2;"></div>
<div class="t" style="right:504.5px;top:400.15px;font-size:14px;line-height:14px;color:#000000;font-weight:400;">R$ 2.468,00</div>
<div style="left:1419px;top:397px;width:114px;height:19px;background:#f2f2f2;"></div>
<div class="t" style="right:389.5px;top:400.15px;font-size:14px;line-height:14px;color:#000000;font-weight:400;">R$ 298.785,96</div>
<div style="left:1534px;top:397px;width:114px;height:19px;background:#f2f2f2;"></div>
<div class="t" style="right:274.5px;top:400.15px;font-size:14px;line-height:14px;color:#000000;font-weight:400;">R$ 2.378,00</div>
<div style="left:1649px;top:397px;width:88px;height:19px;background:#f2f2f2;"></div>
<div class="t" style="right:185.5px;top:400.15px;font-size:14px;line-height:14px;color:#000000;font-weight:400;">353,0</div>
<div style="left:1738px;top:397px;width:70px;height:19px;background:#f2f2f2;"></div>
<div class="t" style="right:115px;top:400.15px;font-size:14px;line-height:14px;color:#000000;font-weight:400;">1</div>
<div style="left:29px;top:417px;width:55px;height:19px;background:#bfbfbf;"></div>
<div class="t" style="right:1838.5px;top:420.15px;font-size:14px;line-height:14px;color:#000000;font-weight:400;">8</div>
<div style="left:85px;top:417px;width:114px;height:19px;background:#f2f2f2;"></div>
<div class="t" style="right:1723.5px;top:420.15px;font-size:14px;line-height:14px;color:#000000;font-weight:400;">R$ 298.785,96</div>
<div style="left:200px;top:417px;width:114px;height:19px;background:#f2f2f2;"></div>
<div class="t" style="right:1608.5px;top:420.15px;font-size:14px;line-height:14px;color:#000000;font-weight:400;">R$ 2.199,42</div>
<div style="left:315px;top:417px;width:114px;height:19px;background:#f2f2f2;"></div>
<div class="t" style="right:1493.5px;top:420.15px;font-size:14px;line-height:14px;color:#000000;font-weight:400;">R$ 2.378,00</div>
<div style="left:430px;top:417px;width:114px;height:19px;background:#f2f2f2;"></div>
<div class="t" style="right:1378.5px;top:420.15px;font-size:14px;line-height:14px;color:#000000;font-weight:400;">R$ 90,00</div>
<div style="left:545px;top:417px;width:114px;height:19px;background:#f2f2f2;"></div>
<div class="t" style="right:1263.5px;top:420.15px;font-size:14px;line-height:14px;color:#000000;font-weight:400;">R$ 2.468,00</div>
<div style="left:660px;top:417px;width:114px;height:19px;background:#f2f2f2;"></div>
<div class="t" style="right:1148.5px;top:420.15px;font-size:14px;line-height:14px;color:#000000;font-weight:400;">R$ 298.607,38</div>
<div style="left:775px;top:417px;width:114px;height:19px;background:#f2f2f2;"></div>
<div class="t" style="right:1033.5px;top:420.15px;font-size:14px;line-height:14px;color:#000000;font-weight:400;">R$ 2.378,00</div>
<div style="left:890px;top:417px;width:88px;height:19px;background:#f2f2f2;"></div>
<div class="t" style="right:944.5px;top:420.15px;font-size:14px;line-height:14px;color:#000000;font-weight:400;">352,0</div>
<div style="left:979px;top:417px;width:114px;height:19px;background:#c6e0b4;"></div>
<div style="left:1094px;top:417px;width:94px;height:19px;background:#c6e0b4;"></div>
<div style="left:1189px;top:417px;width:114px;height:19px;background:#f2f2f2;"></div>
<div class="t" style="right:619.5px;top:420.15px;font-size:14px;line-height:14px;color:#000000;font-weight:400;">R$ 0,00</div>
<div style="left:1304px;top:417px;width:114px;height:19px;background:#f2f2f2;"></div>
<div class="t" style="right:504.5px;top:420.15px;font-size:14px;line-height:14px;color:#000000;font-weight:400;">R$ 2.468,00</div>
<div style="left:1419px;top:417px;width:114px;height:19px;background:#f2f2f2;"></div>
<div class="t" style="right:389.5px;top:420.15px;font-size:14px;line-height:14px;color:#000000;font-weight:400;">R$ 298.607,38</div>
<div style="left:1534px;top:417px;width:114px;height:19px;background:#f2f2f2;"></div>
<div class="t" style="right:274.5px;top:420.15px;font-size:14px;line-height:14px;color:#000000;font-weight:400;">R$ 2.378,00</div>
<div style="left:1649px;top:417px;width:88px;height:19px;background:#f2f2f2;"></div>
<div class="t" style="right:185.5px;top:420.15px;font-size:14px;line-height:14px;color:#000000;font-weight:400;">352,0</div>
<div style="left:1738px;top:417px;width:70px;height:19px;background:#f2f2f2;"></div>
<div class="t" style="right:115px;top:420.15px;font-size:14px;line-height:14px;color:#000000;font-weight:400;">1</div>
<div style="left:29px;top:437px;width:55px;height:19px;background:#bfbfbf;"></div>
<div class="t" style="right:1838.5px;top:440.15px;font-size:14px;line-height:14px;color:#000000;font-weight:400;">9</div>
<div style="left:85px;top:437px;width:114px;height:19px;background:#f2f2f2;"></div>
<div class="t" style="right:1723.5px;top:440.15px;font-size:14px;line-height:14px;color:#000000;font-weight:400;">R$ 298.607,38</div>
<div style="left:200px;top:437px;width:114px;height:19px;background:#f2f2f2;"></div>
<div class="t" style="right:1608.5px;top:440.15px;font-size:14px;line-height:14px;color:#000000;font-weight:400;">R$ 2.198,11</div>
<div style="left:315px;top:437px;width:114px;height:19px;background:#f2f2f2;"></div>
<div class="t" style="right:1493.5px;top:440.15px;font-size:14px;line-height:14px;color:#000000;font-weight:400;">R$ 2.378,00</div>
<div style="left:430px;top:437px;width:114px;height:19px;background:#f2f2f2;"></div>
<div class="t" style="right:1378.5px;top:440.15px;font-size:14px;line-height:14px;color:#000000;font-weight:400;">R$ 90,00</div>
<div style="left:545px;top:437px;width:114px;height:19px;background:#f2f2f2;"></div>
<div class="t" style="right:1263.5px;top:440.15px;font-size:14px;line-height:14px;color:#000000;font-weight:400;">R$ 2.468,00</div>
<div style="left:660px;top:437px;width:114px;height:19px;background:#f2f2f2;"></div>
<div class="t" style="right:1148.5px;top:440.15px;font-size:14px;line-height:14px;color:#000000;font-weight:400;">R$ 298.427,49</div>
<div style="left:775px;top:437px;width:114px;height:19px;background:#f2f2f2;"></div>
<div class="t" style="right:1033.5px;top:440.15px;font-size:14px;line-height:14px;color:#000000;font-weight:400;">R$ 2.378,00</div>
<div style="left:890px;top:437px;width:88px;height:19px;background:#f2f2f2;"></div>
<div class="t" style="right:944.5px;top:440.15px;font-size:14px;line-height:14px;color:#000000;font-weight:400;">351,0</div>
<div style="left:979px;top:437px;width:114px;height:19px;background:#c6e0b4;"></div>
<div style="left:1094px;top:437px;width:94px;height:19px;background:#c6e0b4;"></div>
<div style="left:1189px;top:437px;width:114px;height:19px;background:#f2f2f2;"></div>
<div class="t" style="right:619.5px;top:440.15px;font-size:14px;line-height:14px;color:#000000;font-weight:400;">R$ 0,00</div>
<div style="left:1304px;top:437px;width:114px;height:19px;background:#f2f2f2;"></div>
<div class="t" style="right:504.5px;top:440.15px;font-size:14px;line-height:14px;color:#000000;font-weight:400;">R$ 2.468,00</div>
<div style="left:1419px;top:437px;width:114px;height:19px;background:#f2f2f2;"></div>
<div class="t" style="right:389.5px;top:440.15px;font-size:14px;line-height:14px;color:#000000;font-weight:400;">R$ 298.427,49</div>
<div style="left:1534px;top:437px;width:114px;height:19px;background:#f2f2f2;"></div>
<div class="t" style="right:274.5px;top:440.15px;font-size:14px;line-height:14px;color:#000000;font-weight:400;">R$ 2.378,00</div>
<div style="left:1649px;top:437px;width:88px;height:19px;background:#f2f2f2;"></div>
<div class="t" style="right:185.5px;top:440.15px;font-size:14px;line-height:14px;color:#000000;font-weight:400;">351,0</div>
<div style="left:1738px;top:437px;width:70px;height:19px;background:#f2f2f2;"></div>
<div class="t" style="right:115px;top:440.15px;font-size:14px;line-height:14px;color:#000000;font-weight:400;">1</div>
<div style="left:29px;top:457px;width:55px;height:19px;background:#bfbfbf;"></div>
<div class="t" style="right:1838.5px;top:460.15px;font-size:14px;line-height:14px;color:#000000;font-weight:400;">10</div>
<div style="left:85px;top:457px;width:114px;height:19px;background:#f2f2f2;"></div>
<div class="t" style="right:1723.5px;top:460.15px;font-size:14px;line-height:14px;color:#000000;font-weight:400;">R$ 298.427,49</div>
<div style="left:200px;top:457px;width:114px;height:19px;background:#f2f2f2;"></div>
<div class="t" style="right:1608.5px;top:460.15px;font-size:14px;line-height:14px;color:#000000;font-weight:400;">R$ 2.196,78</div>
<div style="left:315px;top:457px;width:114px;height:19px;background:#f2f2f2;"></div>
<div class="t" style="right:1493.5px;top:460.15px;font-size:14px;line-height:14px;color:#000000;font-weight:400;">R$ 2.378,00</div>
<div style="left:430px;top:457px;width:114px;height:19px;background:#f2f2f2;"></div>
<div class="t" style="right:1378.5px;top:460.15px;font-size:14px;line-height:14px;color:#000000;font-weight:400;">R$ 90,00</div>
<div style="left:545px;top:457px;width:114px;height:19px;background:#f2f2f2;"></div>
<div class="t" style="right:1263.5px;top:460.15px;font-size:14px;line-height:14px;color:#000000;font-weight:400;">R$ 2.468,00</div>
<div style="left:660px;top:457px;width:114px;height:19px;background:#f2f2f2;"></div>
<div class="t" style="right:1148.5px;top:460.15px;font-size:14px;line-height:14px;color:#000000;font-weight:400;">R$ 298.246,27</div>
<div style="left:775px;top:457px;width:114px;height:19px;background:#f2f2f2;"></div>
<div class="t" style="right:1033.5px;top:460.15px;font-size:14px;line-height:14px;color:#000000;font-weight:400;">R$ 2.378,00</div>
<div style="left:890px;top:457px;width:88px;height:19px;background:#f2f2f2;"></div>
<div class="t" style="right:944.5px;top:460.15px;font-size:14px;line-height:14px;color:#000000;font-weight:400;">350,0</div>
<div style="left:979px;top:457px;width:114px;height:19px;background:#c6e0b4;"></div>
<div style="left:1094px;top:457px;width:94px;height:19px;background:#c6e0b4;"></div>
<div style="left:1189px;top:457px;width:114px;height:19px;background:#f2f2f2;"></div>
<div class="t" style="right:619.5px;top:460.15px;font-size:14px;line-height:14px;color:#000000;font-weight:400;">R$ 0,00</div>
<div style="left:1304px;top:457px;width:114px;height:19px;background:#f2f2f2;"></div>
<div class="t" style="right:504.5px;top:460.15px;font-size:14px;line-height:14px;color:#000000;font-weight:400;">R$ 2.468,00</div>
<div style="left:1419px;top:457px;width:114px;height:19px;background:#f2f2f2;"></div>
<div class="t" style="right:389.5px;top:460.15px;font-size:14px;line-height:14px;color:#000000;font-weight:400;">R$ 298.246,27</div>
<div style="left:1534px;top:457px;width:114px;height:19px;background:#f2f2f2;"></div>
<div class="t" style="right:274.5px;top:460.15px;font-size:14px;line-height:14px;color:#000000;font-weight:400;">R$ 2.378,00</div>
<div style="left:1649px;top:457px;width:88px;height:19px;background:#f2f2f2;"></div>
<div class="t" style="right:185.5px;top:460.15px;font-size:14px;line-height:14px;color:#000000;font-weight:400;">350,0</div>
<div style="left:1738px;top:457px;width:70px;height:19px;background:#f2f2f2;"></div>
<div class="t" style="right:115px;top:460.15px;font-size:14px;line-height:14px;color:#000000;font-weight:400;">1</div>
<div style="left:29px;top:477px;width:55px;height:19px;background:#bfbfbf;"></div>
<div class="t" style="right:1838.5px;top:480.15px;font-size:14px;line-height:14px;color:#000000;font-weight:400;">11</div>
<div style="left:85px;top:477px;width:114px;height:19px;background:#f2f2f2;"></div>
<div class="t" style="right:1723.5px;top:480.15px;font-size:14px;line-height:14px;color:#000000;font-weight:400;">R$ 298.246,27</div>
<div style="left:200px;top:477px;width:114px;height:19px;background:#f2f2f2;"></div>
<div class="t" style="right:1608.5px;top:480.15px;font-size:14px;line-height:14px;color:#000000;font-weight:400;">R$ 2.195,45</div>
<div style="left:315px;top:477px;width:114px;height:19px;background:#f2f2f2;"></div>
<div class="t" style="right:1493.5px;top:480.15px;font-size:14px;line-height:14px;color:#000000;font-weight:400;">R$ 2.378,00</div>
<div style="left:430px;top:477px;width:114px;height:19px;background:#f2f2f2;"></div>
<div class="t" style="right:1378.5px;top:480.15px;font-size:14px;line-height:14px;color:#000000;font-weight:400;">R$ 90,00</div>
<div style="left:545px;top:477px;width:114px;height:19px;background:#f2f2f2;"></div>
<div class="t" style="right:1263.5px;top:480.15px;font-size:14px;line-height:14px;color:#000000;font-weight:400;">R$ 2.468,00</div>
<div style="left:660px;top:477px;width:114px;height:19px;background:#f2f2f2;"></div>
<div class="t" style="right:1148.5px;top:480.15px;font-size:14px;line-height:14px;color:#000000;font-weight:400;">R$ 298.063,72</div>
<div style="left:775px;top:477px;width:114px;height:19px;background:#f2f2f2;"></div>
<div class="t" style="right:1033.5px;top:480.15px;font-size:14px;line-height:14px;color:#000000;font-weight:400;">R$ 2.378,00</div>
<div style="left:890px;top:477px;width:88px;height:19px;background:#f2f2f2;"></div>
<div class="t" style="right:944.5px;top:480.15px;font-size:14px;line-height:14px;color:#000000;font-weight:400;">349,0</div>
<div style="left:979px;top:477px;width:114px;height:19px;background:#c6e0b4;"></div>
<div style="left:1094px;top:477px;width:94px;height:19px;background:#c6e0b4;"></div>
<div style="left:1189px;top:477px;width:114px;height:19px;background:#f2f2f2;"></div>
<div class="t" style="right:619.5px;top:480.15px;font-size:14px;line-height:14px;color:#000000;font-weight:400;">R$ 0,00</div>
<div style="left:1304px;top:477px;width:114px;height:19px;background:#f2f2f2;"></div>
<div class="t" style="right:504.5px;top:480.15px;font-size:14px;line-height:14px;color:#000000;font-weight:400;">R$ 2.468,00</div>
<div style="left:1419px;top:477px;width:114px;height:19px;background:#f2f2f2;"></div>
<div class="t" style="right:389.5px;top:480.15px;font-size:14px;line-height:14px;color:#000000;font-weight:400;">R$ 298.063,72</div>
<div style="left:1534px;top:477px;width:114px;height:19px;background:#f2f2f2;"></div>
<div class="t" style="right:274.5px;top:480.15px;font-size:14px;line-height:14px;color:#000000;font-weight:400;">R$ 2.378,00</div>
<div style="left:1649px;top:477px;width:88px;height:19px;background:#f2f2f2;"></div>
<div class="t" style="right:185.5px;top:480.15px;font-size:14px;line-height:14px;color:#000000;font-weight:400;">349,0</div>
<div style="left:1738px;top:477px;width:70px;height:19px;background:#f2f2f2;"></div>
<div class="t" style="right:115px;top:480.15px;font-size:14px;line-height:14px;color:#000000;font-weight:400;">1</div>
<div style="left:29px;top:497px;width:55px;height:19px;background:#bfbfbf;"></div>
<div class="t" style="right:1838.5px;top:500.15px;font-size:14px;line-height:14px;color:#000000;font-weight:400;">12</div>
<div style="left:85px;top:497px;width:114px;height:19px;background:#f2f2f2;"></div>
<div class="t" style="right:1723.5px;top:500.15px;font-size:14px;line-height:14px;color:#000000;font-weight:400;">R$ 298.063,72</div>
<div style="left:200px;top:497px;width:114px;height:19px;background:#f2f2f2;"></div>
<div class="t" style="right:1608.5px;top:500.15px;font-size:14px;line-height:14px;color:#000000;font-weight:400;">R$ 2.194,11</div>
<div style="left:315px;top:497px;width:114px;height:19px;background:#f2f2f2;"></div>
<div class="t" style="right:1493.5px;top:500.15px;font-size:14px;line-height:14px;color:#000000;font-weight:400;">R$ 2.378,00</div>
<div style="left:430px;top:497px;width:114px;height:19px;background:#f2f2f2;"></div>
<div class="t" style="right:1378.5px;top:500.15px;font-size:14px;line-height:14px;color:#000000;font-weight:400;">R$ 90,00</div>
<div style="left:545px;top:497px;width:114px;height:19px;background:#f2f2f2;"></div>
<div class="t" style="right:1263.5px;top:500.15px;font-size:14px;line-height:14px;color:#000000;font-weight:400;">R$ 2.468,00</div>
<div style="left:660px;top:497px;width:114px;height:19px;background:#f2f2f2;"></div>
<div class="t" style="right:1148.5px;top:500.15px;font-size:14px;line-height:14px;color:#000000;font-weight:400;">R$ 297.879,82</div>
<div style="left:775px;top:497px;width:114px;height:19px;background:#f2f2f2;"></div>
<div class="t" style="right:1033.5px;top:500.15px;font-size:14px;line-height:14px;color:#000000;font-weight:400;">R$ 2.378,00</div>
<div style="left:890px;top:497px;width:88px;height:19px;background:#f2f2f2;"></div>
<div class="t" style="right:944.5px;top:500.15px;font-size:14px;line-height:14px;color:#000000;font-weight:400;">348,0</div>
<div style="left:979px;top:497px;width:114px;height:19px;background:#c6e0b4;"></div>
<div style="left:1094px;top:497px;width:94px;height:19px;background:#c6e0b4;"></div>
<div style="left:1189px;top:497px;width:114px;height:19px;background:#f2f2f2;"></div>
<div class="t" style="right:619.5px;top:500.15px;font-size:14px;line-height:14px;color:#000000;font-weight:400;">R$ 0,00</div>
<div style="left:1304px;top:497px;width:114px;height:19px;background:#f2f2f2;"></div>
<div class="t" style="right:504.5px;top:500.15px;font-size:14px;line-height:14px;color:#000000;font-weight:400;">R$ 2.468,00</div>
<div style="left:1419px;top:497px;width:114px;height:19px;background:#f2f2f2;"></div>
<div class="t" style="right:389.5px;top:500.15px;font-size:14px;line-height:14px;color:#000000;font-weight:400;">R$ 297.879,82</div>
<div style="left:1534px;top:497px;width:114px;height:19px;background:#f2f2f2;"></div>
<div class="t" style="right:274.5px;top:500.15px;font-size:14px;line-height:14px;color:#000000;font-weight:400;">R$ 2.378,00</div>
<div style="left:1649px;top:497px;width:88px;height:19px;background:#f2f2f2;"></div>
<div class="t" style="right:185.5px;top:500.15px;font-size:14px;line-height:14px;color:#000000;font-weight:400;">348,0</div>
<div style="left:1738px;top:497px;width:70px;height:19px;background:#f2f2f2;"></div>
<div class="t" style="right:115px;top:500.15px;font-size:14px;line-height:14px;color:#000000;font-weight:400;">1</div>
<div style="left:29px;top:517px;width:55px;height:19px;background:#bfbfbf;"></div>
<div class="t" style="right:1838.5px;top:520.15px;font-size:14px;line-height:14px;color:#000000;font-weight:400;">13</div>
<div style="left:85px;top:517px;width:114px;height:19px;background:#f2f2f2;"></div>
<div class="t" style="right:1723.5px;top:520.15px;font-size:14px;line-height:14px;color:#000000;font-weight:400;">R$ 297.879,82</div>
<div style="left:200px;top:517px;width:114px;height:19px;background:#f2f2f2;"></div>
<div class="t" style="right:1608.5px;top:520.15px;font-size:14px;line-height:14px;color:#000000;font-weight:400;">R$ 2.192,75</div>
<div style="left:315px;top:517px;width:114px;height:19px;background:#f2f2f2;"></div>
<div class="t" style="right:1493.5px;top:520.15px;font-size:14px;line-height:14px;color:#000000;font-weight:400;">R$ 2.378,00</div>
<div style="left:430px;top:517px;width:114px;height:19px;background:#f2f2f2;"></div>
<div class="t" style="right:1378.5px;top:520.15px;font-size:14px;line-height:14px;color:#000000;font-weight:400;">R$ 90,00</div>
<div style="left:545px;top:517px;width:114px;height:19px;background:#f2f2f2;"></div>
<div class="t" style="right:1263.5px;top:520.15px;font-size:14px;line-height:14px;color:#000000;font-weight:400;">R$ 2.468,00</div>
<div style="left:660px;top:517px;width:114px;height:19px;background:#f2f2f2;"></div>
<div class="t" style="right:1148.5px;top:520.15px;font-size:14px;line-height:14px;color:#000000;font-weight:400;">R$ 297.694,57</div>
<div style="left:775px;top:517px;width:114px;height:19px;background:#f2f2f2;"></div>
<div class="t" style="right:1033.5px;top:520.15px;font-size:14px;line-height:14px;color:#000000;font-weight:400;">R$ 2.378,00</div>
<div style="left:890px;top:517px;width:88px;height:19px;background:#f2f2f2;"></div>
<div class="t" style="right:944.5px;top:520.15px;font-size:14px;line-height:14px;color:#000000;font-weight:400;">347,0</div>
<div style="left:979px;top:517px;width:114px;height:19px;background:#c6e0b4;"></div>
<div style="left:1094px;top:517px;width:94px;height:19px;background:#c6e0b4;"></div>
<div style="left:1189px;top:517px;width:114px;height:19px;background:#f2f2f2;"></div>
<div class="t" style="right:619.5px;top:520.15px;font-size:14px;line-height:14px;color:#000000;font-weight:400;">R$ 0,00</div>
<div style="left:1304px;top:517px;width:114px;height:19px;background:#f2f2f2;"></div>
<div class="t" style="right:504.5px;top:520.15px;font-size:14px;line-height:14px;color:#000000;font-weight:400;">R$ 2.468,00</div>
<div style="left:1419px;top:517px;width:114px;height:19px;background:#f2f2f2;"></div>
<div class="t" style="right:389.5px;top:520.15px;font-size:14px;line-height:14px;color:#000000;font-weight:400;">R$ 297.694,57</div>
<div style="left:1534px;top:517px;width:114px;height:19px;background:#f2f2f2;"></div>
<div class="t" style="right:274.5px;top:520.15px;font-size:14px;line-height:14px;color:#000000;font-weight:400;">R$ 2.378,00</div>
<div style="left:1649px;top:517px;width:88px;height:19px;background:#f2f2f2;"></div>
<div class="t" style="right:185.5px;top:520.15px;font-size:14px;line-height:14px;color:#000000;font-weight:400;">347,0</div>
<div style="left:1738px;top:517px;width:70px;height:19px;background:#f2f2f2;"></div>
<div class="t" style="right:115px;top:520.15px;font-size:14px;line-height:14px;color:#000000;font-weight:400;">1</div>
<div style="left:29px;top:537px;width:55px;height:19px;background:#bfbfbf;"></div>
<div class="t" style="right:1838.5px;top:540.15px;font-size:14px;line-height:14px;color:#000000;font-weight:400;">14</div>
<div style="left:85px;top:537px;width:114px;height:19px;background:#f2f2f2;"></div>
<div class="t" style="right:1723.5px;top:540.15px;font-size:14px;line-height:14px;color:#000000;font-weight:400;">R$ 297.694,57</div>
<div style="left:200px;top:537px;width:114px;height:19px;background:#f2f2f2;"></div>
<div class="t" style="right:1608.5px;top:540.15px;font-size:14px;line-height:14px;color:#000000;font-weight:400;">R$ 2.191,39</div>
<div style="left:315px;top:537px;width:114px;height:19px;background:#f2f2f2;"></div>
<div class="t" style="right:1493.5px;top:540.15px;font-size:14px;line-height:14px;color:#000000;font-weight:400;">R$ 2.378,00</div>
<div style="left:430px;top:537px;width:114px;height:19px;background:#f2f2f2;"></div>
<div class="t" style="right:1378.5px;top:540.15px;font-size:14px;line-height:14px;color:#000000;font-weight:400;">R$ 90,00</div>
<div style="left:545px;top:537px;width:114px;height:19px;background:#f2f2f2;"></div>
<div class="t" style="right:1263.5px;top:540.15px;font-size:14px;line-height:14px;color:#000000;font-weight:400;">R$ 2.468,00</div>
<div style="left:660px;top:537px;width:114px;height:19px;background:#f2f2f2;"></div>
<div class="t" style="right:1148.5px;top:540.15px;font-size:14px;line-height:14px;color:#000000;font-weight:400;">R$ 297.507,96</div>
<div style="left:775px;top:537px;width:114px;height:19px;background:#f2f2f2;"></div>
<div class="t" style="right:1033.5px;top:540.15px;font-size:14px;line-height:14px;color:#000000;font-weight:400;">R$ 2.378,00</div>
<div style="left:890px;top:537px;width:88px;height:19px;background:#f2f2f2;"></div>
<div class="t" style="right:944.5px;top:540.15px;font-size:14px;line-height:14px;color:#000000;font-weight:400;">346,0</div>
<div style="left:979px;top:537px;width:114px;height:19px;background:#c6e0b4;"></div>
<div style="left:1094px;top:537px;width:94px;height:19px;background:#c6e0b4;"></div>
<div style="left:1189px;top:537px;width:114px;height:19px;background:#f2f2f2;"></div>
<div class="t" style="right:619.5px;top:540.15px;font-size:14px;line-height:14px;color:#000000;font-weight:400;">R$ 0,00</div>
<div style="left:1304px;top:537px;width:114px;height:19px;background:#f2f2f2;"></div>
<div class="t" style="right:504.5px;top:540.15px;font-size:14px;line-height:14px;color:#000000;font-weight:400;">R$ 2.468,00</div>
<div style="left:1419px;top:537px;width:114px;height:19px;background:#f2f2f2;"></div>
<div class="t" style="right:389.5px;top:540.15px;font-size:14px;line-height:14px;color:#000000;font-weight:400;">R$ 297.507,96</div>
<div style="left:1534px;top:537px;width:114px;height:19px;background:#f2f2f2;"></div>
<div class="t" style="right:274.5px;top:540.15px;font-size:14px;line-height:14px;color:#000000;font-weight:400;">R$ 2.378,00</div>
<div style="left:1649px;top:537px;width:88px;height:19px;background:#f2f2f2;"></div>
<div class="t" style="right:185.5px;top:540.15px;font-size:14px;line-height:14px;color:#000000;font-weight:400;">346,0</div>
<div style="left:1738px;top:537px;width:70px;height:19px;background:#f2f2f2;"></div>
<div class="t" style="right:115px;top:540.15px;font-size:14px;line-height:14px;color:#000000;font-weight:400;">1</div>
<div style="left:29px;top:557px;width:55px;height:19px;background:#bfbfbf;"></div>
<div class="t" style="right:1838.5px;top:560.15px;font-size:14px;line-height:14px;color:#000000;font-weight:400;">15</div>
<div style="left:85px;top:557px;width:114px;height:19px;background:#f2f2f2;"></div>
<div class="t" style="right:1723.5px;top:560.15px;font-size:14px;line-height:14px;color:#000000;font-weight:400;">R$ 297.507,96</div>
<div style="left:200px;top:557px;width:114px;height:19px;background:#f2f2f2;"></div>
<div class="t" style="right:1608.5px;top:560.15px;font-size:14px;line-height:14px;color:#000000;font-weight:400;">R$ 2.190,02</div>
<div style="left:315px;top:557px;width:114px;height:19px;background:#f2f2f2;"></div>
<div class="t" style="right:1493.5px;top:560.15px;font-size:14px;line-height:14px;color:#000000;font-weight:400;">R$ 2.378,00</div>
<div style="left:430px;top:557px;width:114px;height:19px;background:#f2f2f2;"></div>
<div class="t" style="right:1378.5px;top:560.15px;font-size:14px;line-height:14px;color:#000000;font-weight:400;">R$ 90,00</div>
<div style="left:545px;top:557px;width:114px;height:19px;background:#f2f2f2;"></div>
<div class="t" style="right:1263.5px;top:560.15px;font-size:14px;line-height:14px;color:#000000;font-weight:400;">R$ 2.468,00</div>
<div style="left:660px;top:557px;width:114px;height:19px;background:#f2f2f2;"></div>
<div class="t" style="right:1148.5px;top:560.15px;font-size:14px;line-height:14px;color:#000000;font-weight:400;">R$ 297.319,97</div>
<div style="left:775px;top:557px;width:114px;height:19px;background:#f2f2f2;"></div>
<div class="t" style="right:1033.5px;top:560.15px;font-size:14px;line-height:14px;color:#000000;font-weight:400;">R$ 2.378,00</div>
<div style="left:890px;top:557px;width:88px;height:19px;background:#f2f2f2;"></div>
<div class="t" style="right:944.5px;top:560.15px;font-size:14px;line-height:14px;color:#000000;font-weight:400;">345,0</div>
<div style="left:979px;top:557px;width:114px;height:19px;background:#c6e0b4;"></div>
<div style="left:1094px;top:557px;width:94px;height:19px;background:#c6e0b4;"></div>
<div style="left:1189px;top:557px;width:114px;height:19px;background:#f2f2f2;"></div>
<div class="t" style="right:619.5px;top:560.15px;font-size:14px;line-height:14px;color:#000000;font-weight:400;">R$ 0,00</div>
<div style="left:1304px;top:557px;width:114px;height:19px;background:#f2f2f2;"></div>
<div class="t" style="right:504.5px;top:560.15px;font-size:14px;line-height:14px;color:#000000;font-weight:400;">R$ 2.468,00</div>
<div style="left:1419px;top:557px;width:114px;height:19px;background:#f2f2f2;"></div>
<div class="t" style="right:389.5px;top:560.15px;font-size:14px;line-height:14px;color:#000000;font-weight:400;">R$ 297.319,97</div>
<div style="left:1534px;top:557px;width:114px;height:19px;background:#f2f2f2;"></div>
<div class="t" style="right:274.5px;top:560.15px;font-size:14px;line-height:14px;color:#000000;font-weight:400;">R$ 2.378,00</div>
<div style="left:1649px;top:557px;width:88px;height:19px;background:#f2f2f2;"></div>
<div class="t" style="right:185.5px;top:560.15px;font-size:14px;line-height:14px;color:#000000;font-weight:400;">345,0</div>
<div style="left:1738px;top:557px;width:70px;height:19px;background:#f2f2f2;"></div>
<div class="t" style="right:115px;top:560.15px;font-size:14px;line-height:14px;color:#000000;font-weight:400;">1</div>
<div style="left:29px;top:577px;width:55px;height:19px;background:#bfbfbf;"></div>
<div class="t" style="right:1838.5px;top:580.15px;font-size:14px;line-height:14px;color:#000000;font-weight:400;">16</div>
<div style="left:85px;top:577px;width:114px;height:19px;background:#f2f2f2;"></div>
<div class="t" style="right:1723.5px;top:580.15px;font-size:14px;line-height:14px;color:#000000;font-weight:400;">R$ 297.319,97</div>
<div style="left:200px;top:577px;width:114px;height:19px;background:#f2f2f2;"></div>
<div class="t" style="right:1608.5px;top:580.15px;font-size:14px;line-height:14px;color:#000000;font-weight:400;">R$ 2.188,63</div>
<div style="left:315px;top:577px;width:114px;height:19px;background:#f2f2f2;"></div>
<div class="t" style="right:1493.5px;top:580.15px;font-size:14px;line-height:14px;color:#000000;font-weight:400;">R$ 2.378,00</div>
<div style="left:430px;top:577px;width:114px;height:19px;background:#f2f2f2;"></div>
<div class="t" style="right:1378.5px;top:580.15px;font-size:14px;line-height:14px;color:#000000;font-weight:400;">R$ 90,00</div>
<div style="left:545px;top:577px;width:114px;height:19px;background:#f2f2f2;"></div>
<div class="t" style="right:1263.5px;top:580.15px;font-size:14px;line-height:14px;color:#000000;font-weight:400;">R$ 2.468,00</div>
<div style="left:660px;top:577px;width:114px;height:19px;background:#f2f2f2;"></div>
<div class="t" style="right:1148.5px;top:580.15px;font-size:14px;line-height:14px;color:#000000;font-weight:400;">R$ 297.130,60</div>
<div style="left:775px;top:577px;width:114px;height:19px;background:#f2f2f2;"></div>
<div class="t" style="right:1033.5px;top:580.15px;font-size:14px;line-height:14px;color:#000000;font-weight:400;">R$ 2.378,00</div>
<div style="left:890px;top:577px;width:88px;height:19px;background:#f2f2f2;"></div>
<div class="t" style="right:944.5px;top:580.15px;font-size:14px;line-height:14px;color:#000000;font-weight:400;">344,0</div>
<div style="left:979px;top:577px;width:114px;height:19px;background:#c6e0b4;"></div>
<div style="left:1094px;top:577px;width:94px;height:19px;background:#c6e0b4;"></div>
<div style="left:1189px;top:577px;width:114px;height:19px;background:#f2f2f2;"></div>
<div class="t" style="right:619.5px;top:580.15px;font-size:14px;line-height:14px;color:#000000;font-weight:400;">R$ 0,00</div>
<div style="left:1304px;top:577px;width:114px;height:19px;background:#f2f2f2;"></div>
<div class="t" style="right:504.5px;top:580.15px;font-size:14px;line-height:14px;color:#000000;font-weight:400;">R$ 2.468,00</div>
<div style="left:1419px;top:577px;width:114px;height:19px;background:#f2f2f2;"></div>
<div class="t" style="right:389.5px;top:580.15px;font-size:14px;line-height:14px;color:#000000;font-weight:400;">R$ 297.130,60</div>
<div style="left:1534px;top:577px;width:114px;height:19px;background:#f2f2f2;"></div>
<div class="t" style="right:274.5px;top:580.15px;font-size:14px;line-height:14px;color:#000000;font-weight:400;">R$ 2.378,00</div>
<div style="left:1649px;top:577px;width:88px;height:19px;background:#f2f2f2;"></div>
<div class="t" style="right:185.5px;top:580.15px;font-size:14px;line-height:14px;color:#000000;font-weight:400;">344,0</div>
<div style="left:1738px;top:577px;width:70px;height:19px;background:#f2f2f2;"></div>
<div class="t" style="right:115px;top:580.15px;font-size:14px;line-height:14px;color:#000000;font-weight:400;">1</div>
<div style="left:29px;top:597px;width:55px;height:19px;background:#bfbfbf;"></div>
<div class="t" style="right:1838.5px;top:600.15px;font-size:14px;line-height:14px;color:#000000;font-weight:400;">17</div>
<div style="left:85px;top:597px;width:114px;height:19px;background:#f2f2f2;"></div>
<div class="t" style="right:1723.5px;top:600.15px;font-size:14px;line-height:14px;color:#000000;font-weight:400;">R$ 297.130,60</div>
<div style="left:200px;top:597px;width:114px;height:19px;background:#f2f2f2;"></div>
<div class="t" style="right:1608.5px;top:600.15px;font-size:14px;line-height:14px;color:#000000;font-weight:400;">R$ 2.187,24</div>
<div style="left:315px;top:597px;width:114px;height:19px;background:#f2f2f2;"></div>
<div class="t" style="right:1493.5px;top:600.15px;font-size:14px;line-height:14px;color:#000000;font-weight:400;">R$ 2.378,00</div>
<div style="left:430px;top:597px;width:114px;height:19px;background:#f2f2f2;"></div>
<div class="t" style="right:1378.5px;top:600.15px;font-size:14px;line-height:14px;color:#000000;font-weight:400;">R$ 90,00</div>
<div style="left:545px;top:597px;width:114px;height:19px;background:#f2f2f2;"></div>
<div class="t" style="right:1263.5px;top:600.15px;font-size:14px;line-height:14px;color:#000000;font-weight:400;">R$ 2.468,00</div>
<div style="left:660px;top:597px;width:114px;height:19px;background:#f2f2f2;"></div>
<div class="t" style="right:1148.5px;top:600.15px;font-size:14px;line-height:14px;color:#000000;font-weight:400;">R$ 296.939,84</div>
<div style="left:775px;top:597px;width:114px;height:19px;background:#f2f2f2;"></div>
<div class="t" style="right:1033.5px;top:600.15px;font-size:14px;line-height:14px;color:#000000;font-weight:400;">R$ 2.378,00</div>
<div style="left:890px;top:597px;width:88px;height:19px;background:#f2f2f2;"></div>
<div class="t" style="right:944.5px;top:600.15px;font-size:14px;line-height:14px;color:#000000;font-weight:400;">343,0</div>
<div style="left:979px;top:597px;width:114px;height:19px;background:#c6e0b4;"></div>
<div style="left:1094px;top:597px;width:94px;height:19px;background:#c6e0b4;"></div>
<div style="left:1189px;top:597px;width:114px;height:19px;background:#f2f2f2;"></div>
<div class="t" style="right:619.5px;top:600.15px;font-size:14px;line-height:14px;color:#000000;font-weight:400;">R$ 0,00</div>
<div style="left:1304px;top:597px;width:114px;height:19px;background:#f2f2f2;"></div>
<div class="t" style="right:504.5px;top:600.15px;font-size:14px;line-height:14px;color:#000000;font-weight:400;">R$ 2.468,00</div>
<div style="left:1419px;top:597px;width:114px;height:19px;background:#f2f2f2;"></div>
<div class="t" style="right:389.5px;top:600.15px;font-size:14px;line-height:14px;color:#000000;font-weight:400;">R$ 296.939,84</div>
<div style="left:1534px;top:597px;width:114px;height:19px;background:#f2f2f2;"></div>
<div class="t" style="right:274.5px;top:600.15px;font-size:14px;line-height:14px;color:#000000;font-weight:400;">R$ 2.378,00</div>
<div style="left:1649px;top:597px;width:88px;height:19px;background:#f2f2f2;"></div>
<div class="t" style="right:185.5px;top:600.15px;font-size:14px;line-height:14px;color:#000000;font-weight:400;">343,0</div>
<div style="left:1738px;top:597px;width:70px;height:19px;background:#f2f2f2;"></div>
<div class="t" style="right:115px;top:600.15px;font-size:14px;line-height:14px;color:#000000;font-weight:400;">1</div>
<div style="left:29px;top:617px;width:55px;height:19px;background:#bfbfbf;"></div>
<div class="t" style="right:1838.5px;top:620.15px;font-size:14px;line-height:14px;color:#000000;font-weight:400;">18</div>
<div style="left:85px;top:617px;width:114px;height:19px;background:#f2f2f2;"></div>
<div class="t" style="right:1723.5px;top:620.15px;font-size:14px;line-height:14px;color:#000000;font-weight:400;">R$ 296.939,84</div>
<div style="left:200px;top:617px;width:114px;height:19px;background:#f2f2f2;"></div>
<div class="t" style="right:1608.5px;top:620.15px;font-size:14px;line-height:14px;color:#000000;font-weight:400;">R$ 2.185,83</div>
<div style="left:315px;top:617px;width:114px;height:19px;background:#f2f2f2;"></div>
<div class="t" style="right:1493.5px;top:620.15px;font-size:14px;line-height:14px;color:#000000;font-weight:400;">R$ 2.378,00</div>
<div style="left:430px;top:617px;width:114px;height:19px;background:#f2f2f2;"></div>
<div class="t" style="right:1378.5px;top:620.15px;font-size:14px;line-height:14px;color:#000000;font-weight:400;">R$ 90,00</div>
<div style="left:545px;top:617px;width:114px;height:19px;background:#f2f2f2;"></div>
<div class="t" style="right:1263.5px;top:620.15px;font-size:14px;line-height:14px;color:#000000;font-weight:400;">R$ 2.468,00</div>
<div style="left:660px;top:617px;width:114px;height:19px;background:#f2f2f2;"></div>
<div class="t" style="right:1148.5px;top:620.15px;font-size:14px;line-height:14px;color:#000000;font-weight:400;">R$ 296.747,67</div>
<div style="left:775px;top:617px;width:114px;height:19px;background:#f2f2f2;"></div>
<div class="t" style="right:1033.5px;top:620.15px;font-size:14px;line-height:14px;color:#000000;font-weight:400;">R$ 2.378,00</div>
<div style="left:890px;top:617px;width:88px;height:19px;background:#f2f2f2;"></div>
<div class="t" style="right:944.5px;top:620.15px;font-size:14px;line-height:14px;color:#000000;font-weight:400;">342,0</div>
<div style="left:979px;top:617px;width:114px;height:19px;background:#c6e0b4;"></div>
<div style="left:1094px;top:617px;width:94px;height:19px;background:#c6e0b4;"></div>
<div style="left:1189px;top:617px;width:114px;height:19px;background:#f2f2f2;"></div>
<div class="t" style="right:619.5px;top:620.15px;font-size:14px;line-height:14px;color:#000000;font-weight:400;">R$ 0,00</div>
<div style="left:1304px;top:617px;width:114px;height:19px;background:#f2f2f2;"></div>
<div class="t" style="right:504.5px;top:620.15px;font-size:14px;line-height:14px;color:#000000;font-weight:400;">R$ 2.468,00</div>
<div style="left:1419px;top:617px;width:114px;height:19px;background:#f2f2f2;"></div>
<div class="t" style="right:389.5px;top:620.15px;font-size:14px;line-height:14px;color:#000000;font-weight:400;">R$ 296.747,67</div>
<div style="left:1534px;top:617px;width:114px;height:19px;background:#f2f2f2;"></div>
<div class="t" style="right:274.5px;top:620.15px;font-size:14px;line-height:14px;color:#000000;font-weight:400;">R$ 2.378,00</div>
<div style="left:1649px;top:617px;width:88px;height:19px;background:#f2f2f2;"></div>
<div class="t" style="right:185.5px;top:620.15px;font-size:14px;line-height:14px;color:#000000;font-weight:400;">342,0</div>
<div style="left:1738px;top:617px;width:70px;height:19px;background:#f2f2f2;"></div>
<div class="t" style="right:115px;top:620.15px;font-size:14px;line-height:14px;color:#000000;font-weight:400;">1</div>
<div style="left:29px;top:637px;width:55px;height:19px;background:#bfbfbf;"></div>
<div class="t" style="right:1838.5px;top:640.15px;font-size:14px;line-height:14px;color:#000000;font-weight:400;">19</div>
<div style="left:85px;top:637px;width:114px;height:19px;background:#f2f2f2;"></div>
<div class="t" style="right:1723.5px;top:640.15px;font-size:14px;line-height:14px;color:#000000;font-weight:400;">R$ 296.747,67</div>
<div style="left:200px;top:637px;width:114px;height:19px;background:#f2f2f2;"></div>
<div class="t" style="right:1608.5px;top:640.15px;font-size:14px;line-height:14px;color:#000000;font-weight:400;">R$ 2.184,42</div>
<div style="left:315px;top:637px;width:114px;height:19px;background:#f2f2f2;"></div>
<div class="t" style="right:1493.5px;top:640.15px;font-size:14px;line-height:14px;color:#000000;font-weight:400;">R$ 2.378,00</div>
<div style="left:430px;top:637px;width:114px;height:19px;background:#f2f2f2;"></div>
<div class="t" style="right:1378.5px;top:640.15px;font-size:14px;line-height:14px;color:#000000;font-weight:400;">R$ 90,00</div>
<div style="left:545px;top:637px;width:114px;height:19px;background:#f2f2f2;"></div>
<div class="t" style="right:1263.5px;top:640.15px;font-size:14px;line-height:14px;color:#000000;font-weight:400;">R$ 2.468,00</div>
<div style="left:660px;top:637px;width:114px;height:19px;background:#f2f2f2;"></div>
<div class="t" style="right:1148.5px;top:640.15px;font-size:14px;line-height:14px;color:#000000;font-weight:400;">R$ 296.554,09</div>
<div style="left:775px;top:637px;width:114px;height:19px;background:#f2f2f2;"></div>
<div class="t" style="right:1033.5px;top:640.15px;font-size:14px;line-height:14px;color:#000000;font-weight:400;">R$ 2.378,00</div>
<div style="left:890px;top:637px;width:88px;height:19px;background:#f2f2f2;"></div>
<div class="t" style="right:944.5px;top:640.15px;font-size:14px;line-height:14px;color:#000000;font-weight:400;">341,0</div>
<div style="left:979px;top:637px;width:114px;height:19px;background:#c6e0b4;"></div>
<div style="left:1094px;top:637px;width:94px;height:19px;background:#c6e0b4;"></div>
<div style="left:1189px;top:637px;width:114px;height:19px;background:#f2f2f2;"></div>
<div class="t" style="right:619.5px;top:640.15px;font-size:14px;line-height:14px;color:#000000;font-weight:400;">R$ 0,00</div>
<div style="left:1304px;top:637px;width:114px;height:19px;background:#f2f2f2;"></div>
<div class="t" style="right:504.5px;top:640.15px;font-size:14px;line-height:14px;color:#000000;font-weight:400;">R$ 2.468,00</div>
<div style="left:1419px;top:637px;width:114px;height:19px;background:#f2f2f2;"></div>
<div class="t" style="right:389.5px;top:640.15px;font-size:14px;line-height:14px;color:#000000;font-weight:400;">R$ 296.554,09</div>
<div style="left:1534px;top:637px;width:114px;height:19px;background:#f2f2f2;"></div>
<div class="t" style="right:274.5px;top:640.15px;font-size:14px;line-height:14px;color:#000000;font-weight:400;">R$ 2.378,00</div>
<div style="left:1649px;top:637px;width:88px;height:19px;background:#f2f2f2;"></div>
<div class="t" style="right:185.5px;top:640.15px;font-size:14px;line-height:14px;color:#000000;font-weight:400;">341,0</div>
<div style="left:1738px;top:637px;width:70px;height:19px;background:#f2f2f2;"></div>
<div class="t" style="right:115px;top:640.15px;font-size:14px;line-height:14px;color:#000000;font-weight:400;">1</div>
<div style="left:29px;top:657px;width:55px;height:19px;background:#bfbfbf;"></div>
<div class="t" style="right:1838.5px;top:660.15px;font-size:14px;line-height:14px;color:#000000;font-weight:400;">20</div>
<div style="left:85px;top:657px;width:114px;height:19px;background:#f2f2f2;"></div>
<div class="t" style="right:1723.5px;top:660.15px;font-size:14px;line-height:14px;color:#000000;font-weight:400;">R$ 296.554,09</div>
<div style="left:200px;top:657px;width:114px;height:19px;background:#f2f2f2;"></div>
<div class="t" style="right:1608.5px;top:660.15px;font-size:14px;line-height:14px;color:#000000;font-weight:400;">R$ 2.182,99</div>
<div style="left:315px;top:657px;width:114px;height:19px;background:#f2f2f2;"></div>
<div class="t" style="right:1493.5px;top:660.15px;font-size:14px;line-height:14px;color:#000000;font-weight:400;">R$ 2.378,00</div>
<div style="left:430px;top:657px;width:114px;height:19px;background:#f2f2f2;"></div>
<div class="t" style="right:1378.5px;top:660.15px;font-size:14px;line-height:14px;color:#000000;font-weight:400;">R$ 90,00</div>
<div style="left:545px;top:657px;width:114px;height:19px;background:#f2f2f2;"></div>
<div class="t" style="right:1263.5px;top:660.15px;font-size:14px;line-height:14px;color:#000000;font-weight:400;">R$ 2.468,00</div>
<div style="left:660px;top:657px;width:114px;height:19px;background:#f2f2f2;"></div>
<div class="t" style="right:1148.5px;top:660.15px;font-size:14px;line-height:14px;color:#000000;font-weight:400;">R$ 296.359,08</div>
<div style="left:775px;top:657px;width:114px;height:19px;background:#f2f2f2;"></div>
<div class="t" style="right:1033.5px;top:660.15px;font-size:14px;line-height:14px;color:#000000;font-weight:400;">R$ 2.378,00</div>
<div style="left:890px;top:657px;width:88px;height:19px;background:#f2f2f2;"></div>
<div class="t" style="right:944.5px;top:660.15px;font-size:14px;line-height:14px;color:#000000;font-weight:400;">340,0</div>
<div style="left:979px;top:657px;width:114px;height:19px;background:#c6e0b4;"></div>
<div style="left:1094px;top:657px;width:94px;height:19px;background:#c6e0b4;"></div>
<div style="left:1189px;top:657px;width:114px;height:19px;background:#f2f2f2;"></div>
<div class="t" style="right:619.5px;top:660.15px;font-size:14px;line-height:14px;color:#000000;font-weight:400;">R$ 0,00</div>
<div style="left:1304px;top:657px;width:114px;height:19px;background:#f2f2f2;"></div>
<div class="t" style="right:504.5px;top:660.15px;font-size:14px;line-height:14px;color:#000000;font-weight:400;">R$ 2.468,00</div>
<div style="left:1419px;top:657px;width:114px;height:19px;background:#f2f2f2;"></div>
<div class="t" style="right:389.5px;top:660.15px;font-size:14px;line-height:14px;color:#000000;font-weight:400;">R$ 296.359,08</div>
<div style="left:1534px;top:657px;width:114px;height:19px;background:#f2f2f2;"></div>
<div class="t" style="right:274.5px;top:660.15px;font-size:14px;line-height:14px;color:#000000;font-weight:400;">R$ 2.378,00</div>
<div style="left:1649px;top:657px;width:88px;height:19px;background:#f2f2f2;"></div>
<div class="t" style="right:185.5px;top:660.15px;font-size:14px;line-height:14px;color:#000000;font-weight:400;">340,0</div>
<div style="left:1738px;top:657px;width:70px;height:19px;background:#f2f2f2;"></div>
<div class="t" style="right:115px;top:660.15px;font-size:14px;line-height:14px;color:#000000;font-weight:400;">1</div>
<div style="left:29px;top:677px;width:55px;height:19px;background:#bfbfbf;"></div>
<div class="t" style="right:1838.5px;top:680.15px;font-size:14px;line-height:14px;color:#000000;font-weight:400;">21</div>
<div style="left:85px;top:677px;width:114px;height:19px;background:#f2f2f2;"></div>
<div class="t" style="right:1723.5px;top:680.15px;font-size:14px;line-height:14px;color:#000000;font-weight:400;">R$ 296.359,08</div>
<div style="left:200px;top:677px;width:114px;height:19px;background:#f2f2f2;"></div>
<div class="t" style="right:1608.5px;top:680.15px;font-size:14px;line-height:14px;color:#000000;font-weight:400;">R$ 2.181,56</div>
<div style="left:315px;top:677px;width:114px;height:19px;background:#f2f2f2;"></div>
<div class="t" style="right:1493.5px;top:680.15px;font-size:14px;line-height:14px;color:#000000;font-weight:400;">R$ 2.378,00</div>
<div style="left:430px;top:677px;width:114px;height:19px;background:#f2f2f2;"></div>
<div class="t" style="right:1378.5px;top:680.15px;font-size:14px;line-height:14px;color:#000000;font-weight:400;">R$ 90,00</div>
<div style="left:545px;top:677px;width:114px;height:19px;background:#f2f2f2;"></div>
<div class="t" style="right:1263.5px;top:680.15px;font-size:14px;line-height:14px;color:#000000;font-weight:400;">R$ 2.468,00</div>
<div style="left:660px;top:677px;width:114px;height:19px;background:#f2f2f2;"></div>
<div class="t" style="right:1148.5px;top:680.15px;font-size:14px;line-height:14px;color:#000000;font-weight:400;">R$ 296.162,64</div>
<div style="left:775px;top:677px;width:114px;height:19px;background:#f2f2f2;"></div>
<div class="t" style="right:1033.5px;top:680.15px;font-size:14px;line-height:14px;color:#000000;font-weight:400;">R$ 2.378,00</div>
<div style="left:890px;top:677px;width:88px;height:19px;background:#f2f2f2;"></div>
<div class="t" style="right:944.5px;top:680.15px;font-size:14px;line-height:14px;color:#000000;font-weight:400;">339,0</div>
<div style="left:979px;top:677px;width:114px;height:19px;background:#c6e0b4;"></div>
<div style="left:1094px;top:677px;width:94px;height:19px;background:#c6e0b4;"></div>
<div style="left:1189px;top:677px;width:114px;height:19px;background:#f2f2f2;"></div>
<div class="t" style="right:619.5px;top:680.15px;font-size:14px;line-height:14px;color:#000000;font-weight:400;">R$ 0,00</div>
<div style="left:1304px;top:677px;width:114px;height:19px;background:#f2f2f2;"></div>
<div class="t" style="right:504.5px;top:680.15px;font-size:14px;line-height:14px;color:#000000;font-weight:400;">R$ 2.468,00</div>
<div style="left:1419px;top:677px;width:114px;height:19px;background:#f2f2f2;"></div>
<div class="t" style="right:389.5px;top:680.15px;font-size:14px;line-height:14px;color:#000000;font-weight:400;">R$ 296.162,64</div>
<div style="left:1534px;top:677px;width:114px;height:19px;background:#f2f2f2;"></div>
<div class="t" style="right:274.5px;top:680.15px;font-size:14px;line-height:14px;color:#000000;font-weight:400;">R$ 2.378,00</div>
<div style="left:1649px;top:677px;width:88px;height:19px;background:#f2f2f2;"></div>
<div class="t" style="right:185.5px;top:680.15px;font-size:14px;line-height:14px;color:#000000;font-weight:400;">339,0</div>
<div style="left:1738px;top:677px;width:70px;height:19px;background:#f2f2f2;"></div>
<div class="t" style="right:115px;top:680.15px;font-size:14px;line-height:14px;color:#000000;font-weight:400;">1</div>
<div style="left:29px;top:697px;width:55px;height:19px;background:#bfbfbf;"></div>
<div class="t" style="right:1838.5px;top:700.15px;font-size:14px;line-height:14px;color:#000000;font-weight:400;">22</div>
<div style="left:85px;top:697px;width:114px;height:19px;background:#f2f2f2;"></div>
<div class="t" style="right:1723.5px;top:700.15px;font-size:14px;line-height:14px;color:#000000;font-weight:400;">R$ 296.162,64</div>
<div style="left:200px;top:697px;width:114px;height:19px;background:#f2f2f2;"></div>
<div class="t" style="right:1608.5px;top:700.15px;font-size:14px;line-height:14px;color:#000000;font-weight:400;">R$ 2.180,11</div>
<div style="left:315px;top:697px;width:114px;height:19px;background:#f2f2f2;"></div>
<div class="t" style="right:1493.5px;top:700.15px;font-size:14px;line-height:14px;color:#000000;font-weight:400;">R$ 2.378,00</div>
<div style="left:430px;top:697px;width:114px;height:19px;background:#f2f2f2;"></div>
<div class="t" style="right:1378.5px;top:700.15px;font-size:14px;line-height:14px;color:#000000;font-weight:400;">R$ 90,00</div>
<div style="left:545px;top:697px;width:114px;height:19px;background:#f2f2f2;"></div>
<div class="t" style="right:1263.5px;top:700.15px;font-size:14px;line-height:14px;color:#000000;font-weight:400;">R$ 2.468,00</div>
<div style="left:660px;top:697px;width:114px;height:19px;background:#f2f2f2;"></div>
<div class="t" style="right:1148.5px;top:700.15px;font-size:14px;line-height:14px;color:#000000;font-weight:400;">R$ 295.964,75</div>
<div style="left:775px;top:697px;width:114px;height:19px;background:#f2f2f2;"></div>
<div class="t" style="right:1033.5px;top:700.15px;font-size:14px;line-height:14px;color:#000000;font-weight:400;">R$ 2.378,00</div>
<div style="left:890px;top:697px;width:88px;height:19px;background:#f2f2f2;"></div>
<div class="t" style="right:944.5px;top:700.15px;font-size:14px;line-height:14px;color:#000000;font-weight:400;">338,0</div>
<div style="left:979px;top:697px;width:114px;height:19px;background:#c6e0b4;"></div>
<div style="left:1094px;top:697px;width:94px;height:19px;background:#c6e0b4;"></div>
<div style="left:1189px;top:697px;width:114px;height:19px;background:#f2f2f2;"></div>
<div class="t" style="right:619.5px;top:700.15px;font-size:14px;line-height:14px;color:#000000;font-weight:400;">R$ 0,00</div>
<div style="left:1304px;top:697px;width:114px;height:19px;background:#f2f2f2;"></div>
<div class="t" style="right:504.5px;top:700.15px;font-size:14px;line-height:14px;color:#000000;font-weight:400;">R$ 2.468,00</div>
<div style="left:1419px;top:697px;width:114px;height:19px;background:#f2f2f2;"></div>
<div class="t" style="right:389.5px;top:700.15px;font-size:14px;line-height:14px;color:#000000;font-weight:400;">R$ 295.964,75</div>
<div style="left:1534px;top:697px;width:114px;height:19px;background:#f2f2f2;"></div>
<div class="t" style="right:274.5px;top:700.15px;font-size:14px;line-height:14px;color:#000000;font-weight:400;">R$ 2.378,00</div>
<div style="left:1649px;top:697px;width:88px;height:19px;background:#f2f2f2;"></div>
<div class="t" style="right:185.5px;top:700.15px;font-size:14px;line-height:14px;color:#000000;font-weight:400;">338,0</div>
<div style="left:1738px;top:697px;width:70px;height:19px;background:#f2f2f2;"></div>
<div class="t" style="right:115px;top:700.15px;font-size:14px;line-height:14px;color:#000000;font-weight:400;">1</div>
<div style="left:29px;top:717px;width:55px;height:19px;background:#bfbfbf;"></div>
<div class="t" style="right:1838.5px;top:720.15px;font-size:14px;line-height:14px;color:#000000;font-weight:400;">23</div>
<div style="left:85px;top:717px;width:114px;height:19px;background:#f2f2f2;"></div>
<div class="t" style="right:1723.5px;top:720.15px;font-size:14px;line-height:14px;color:#000000;font-weight:400;">R$ 295.964,75</div>
<div style="left:200px;top:717px;width:114px;height:19px;background:#f2f2f2;"></div>
<div class="t" style="right:1608.5px;top:720.15px;font-size:14px;line-height:14px;color:#000000;font-weight:400;">R$ 2.178,66</div>
<div style="left:315px;top:717px;width:114px;height:19px;background:#f2f2f2;"></div>
<div class="t" style="right:1493.5px;top:720.15px;font-size:14px;line-height:14px;color:#000000;font-weight:400;">R$ 2.378,00</div>
<div style="left:430px;top:717px;width:114px;height:19px;background:#f2f2f2;"></div>
<div class="t" style="right:1378.5px;top:720.15px;font-size:14px;line-height:14px;color:#000000;font-weight:400;">R$ 90,00</div>
<div style="left:545px;top:717px;width:114px;height:19px;background:#f2f2f2;"></div>
<div class="t" style="right:1263.5px;top:720.15px;font-size:14px;line-height:14px;color:#000000;font-weight:400;">R$ 2.468,00</div>
<div style="left:660px;top:717px;width:114px;height:19px;background:#f2f2f2;"></div>
<div class="t" style="right:1148.5px;top:720.15px;font-size:14px;line-height:14px;color:#000000;font-weight:400;">R$ 295.765,40</div>
<div style="left:775px;top:717px;width:114px;height:19px;background:#f2f2f2;"></div>
<div class="t" style="right:1033.5px;top:720.15px;font-size:14px;line-height:14px;color:#000000;font-weight:400;">R$ 2.378,00</div>
<div style="left:890px;top:717px;width:88px;height:19px;background:#f2f2f2;"></div>
<div class="t" style="right:944.5px;top:720.15px;font-size:14px;line-height:14px;color:#000000;font-weight:400;">337,0</div>
<div style="left:979px;top:717px;width:114px;height:19px;background:#c6e0b4;"></div>
<div style="left:1094px;top:717px;width:94px;height:19px;background:#c6e0b4;"></div>
<div style="left:1189px;top:717px;width:114px;height:19px;background:#f2f2f2;"></div>
<div class="t" style="right:619.5px;top:720.15px;font-size:14px;line-height:14px;color:#000000;font-weight:400;">R$ 0,00</div>
<div style="left:1304px;top:717px;width:114px;height:19px;background:#f2f2f2;"></div>
<div class="t" style="right:504.5px;top:720.15px;font-size:14px;line-height:14px;color:#000000;font-weight:400;">R$ 2.468,00</div>
<div style="left:1419px;top:717px;width:114px;height:19px;background:#f2f2f2;"></div>
<div class="t" style="right:389.5px;top:720.15px;font-size:14px;line-height:14px;color:#000000;font-weight:400;">R$ 295.765,40</div>
<div style="left:1534px;top:717px;width:114px;height:19px;background:#f2f2f2;"></div>
<div class="t" style="right:274.5px;top:720.15px;font-size:14px;line-height:14px;color:#000000;font-weight:400;">R$ 2.378,00</div>
<div style="left:1649px;top:717px;width:88px;height:19px;background:#f2f2f2;"></div>
<div class="t" style="right:185.5px;top:720.15px;font-size:14px;line-height:14px;color:#000000;font-weight:400;">337,0</div>
<div style="left:1738px;top:717px;width:70px;height:19px;background:#f2f2f2;"></div>
<div class="t" style="right:115px;top:720.15px;font-size:14px;line-height:14px;color:#000000;font-weight:400;">1</div>
<div style="left:29px;top:737px;width:55px;height:19px;background:#bfbfbf;"></div>
<div class="t" style="right:1838.5px;top:740.15px;font-size:14px;line-height:14px;color:#000000;font-weight:400;">24</div>
<div style="left:85px;top:737px;width:114px;height:19px;background:#f2f2f2;"></div>
<div class="t" style="right:1723.5px;top:740.15px;font-size:14px;line-height:14px;color:#000000;font-weight:400;">R$ 295.765,40</div>
<div style="left:200px;top:737px;width:114px;height:19px;background:#f2f2f2;"></div>
<div class="t" style="right:1608.5px;top:740.15px;font-size:14px;line-height:14px;color:#000000;font-weight:400;">R$ 2.177,19</div>
<div style="left:315px;top:737px;width:114px;height:19px;background:#f2f2f2;"></div>
<div class="t" style="right:1493.5px;top:740.15px;font-size:14px;line-height:14px;color:#000000;font-weight:400;">R$ 2.378,00</div>
<div style="left:430px;top:737px;width:114px;height:19px;background:#f2f2f2;"></div>
<div class="t" style="right:1378.5px;top:740.15px;font-size:14px;line-height:14px;color:#000000;font-weight:400;">R$ 90,00</div>
<div style="left:545px;top:737px;width:114px;height:19px;background:#f2f2f2;"></div>
<div class="t" style="right:1263.5px;top:740.15px;font-size:14px;line-height:14px;color:#000000;font-weight:400;">R$ 2.468,00</div>
<div style="left:660px;top:737px;width:114px;height:19px;background:#f2f2f2;"></div>
<div class="t" style="right:1148.5px;top:740.15px;font-size:14px;line-height:14px;color:#000000;font-weight:400;">R$ 295.564,59</div>
<div style="left:775px;top:737px;width:114px;height:19px;background:#f2f2f2;"></div>
<div class="t" style="right:1033.5px;top:740.15px;font-size:14px;line-height:14px;color:#000000;font-weight:400;">R$ 2.378,00</div>
<div style="left:890px;top:737px;width:88px;height:19px;background:#f2f2f2;"></div>
<div class="t" style="right:944.5px;top:740.15px;font-size:14px;line-height:14px;color:#000000;font-weight:400;">336,0</div>
<div style="left:979px;top:737px;width:114px;height:19px;background:#c6e0b4;"></div>
<div style="left:1094px;top:737px;width:94px;height:19px;background:#c6e0b4;"></div>
<div style="left:1189px;top:737px;width:114px;height:19px;background:#f2f2f2;"></div>
<div class="t" style="right:619.5px;top:740.15px;font-size:14px;line-height:14px;color:#000000;font-weight:400;">R$ 0,00</div>
<div style="left:1304px;top:737px;width:114px;height:19px;background:#f2f2f2;"></div>
<div class="t" style="right:504.5px;top:740.15px;font-size:14px;line-height:14px;color:#000000;font-weight:400;">R$ 2.468,00</div>
<div style="left:1419px;top:737px;width:114px;height:19px;background:#f2f2f2;"></div>
<div class="t" style="right:389.5px;top:740.15px;font-size:14px;line-height:14px;color:#000000;font-weight:400;">R$ 295.564,59</div>
<div style="left:1534px;top:737px;width:114px;height:19px;background:#f2f2f2;"></div>
<div class="t" style="right:274.5px;top:740.15px;font-size:14px;line-height:14px;color:#000000;font-weight:400;">R$ 2.378,00</div>
<div style="left:1649px;top:737px;width:88px;height:19px;background:#f2f2f2;"></div>
<div class="t" style="right:185.5px;top:740.15px;font-size:14px;line-height:14px;color:#000000;font-weight:400;">336,0</div>
<div style="left:1738px;top:737px;width:70px;height:19px;background:#f2f2f2;"></div>
<div class="t" style="right:115px;top:740.15px;font-size:14px;line-height:14px;color:#000000;font-weight:400;">1</div>
<div style="left:29px;top:757px;width:55px;height:19px;background:#bfbfbf;"></div>
<div class="t" style="right:1838.5px;top:760.15px;font-size:14px;line-height:14px;color:#000000;font-weight:400;">25</div>
<div style="left:85px;top:757px;width:114px;height:19px;background:#f2f2f2;"></div>
<div class="t" style="right:1723.5px;top:760.15px;font-size:14px;line-height:14px;color:#000000;font-weight:400;">R$ 295.564,59</div>
<div style="left:200px;top:757px;width:114px;height:19px;background:#f2f2f2;"></div>
<div class="t" style="right:1608.5px;top:760.15px;font-size:14px;line-height:14px;color:#000000;font-weight:400;">R$ 2.175,71</div>
<div style="left:315px;top:757px;width:114px;height:19px;background:#f2f2f2;"></div>
<div class="t" style="right:1493.5px;top:760.15px;font-size:14px;line-height:14px;color:#000000;font-weight:400;">R$ 2.378,00</div>
<div style="left:430px;top:757px;width:114px;height:19px;background:#f2f2f2;"></div>
<div class="t" style="right:1378.5px;top:760.15px;font-size:14px;line-height:14px;color:#000000;font-weight:400;">R$ 90,00</div>
<div style="left:545px;top:757px;width:114px;height:19px;background:#f2f2f2;"></div>
<div class="t" style="right:1263.5px;top:760.15px;font-size:14px;line-height:14px;color:#000000;font-weight:400;">R$ 2.468,00</div>
<div style="left:660px;top:757px;width:114px;height:19px;background:#f2f2f2;"></div>
<div class="t" style="right:1148.5px;top:760.15px;font-size:14px;line-height:14px;color:#000000;font-weight:400;">R$ 295.362,30</div>
<div style="left:775px;top:757px;width:114px;height:19px;background:#f2f2f2;"></div>
<div class="t" style="right:1033.5px;top:760.15px;font-size:14px;line-height:14px;color:#000000;font-weight:400;">R$ 2.378,00</div>
<div style="left:890px;top:757px;width:88px;height:19px;background:#f2f2f2;"></div>
<div class="t" style="right:944.5px;top:760.15px;font-size:14px;line-height:14px;color:#000000;font-weight:400;">335,0</div>
<div style="left:979px;top:757px;width:114px;height:19px;background:#c6e0b4;"></div>
<div style="left:1094px;top:757px;width:94px;height:19px;background:#c6e0b4;"></div>
<div style="left:1189px;top:757px;width:114px;height:19px;background:#f2f2f2;"></div>
<div class="t" style="right:619.5px;top:760.15px;font-size:14px;line-height:14px;color:#000000;font-weight:400;">R$ 0,00</div>
<div style="left:1304px;top:757px;width:114px;height:19px;background:#f2f2f2;"></div>
<div class="t" style="right:504.5px;top:760.15px;font-size:14px;line-height:14px;color:#000000;font-weight:400;">R$ 2.468,00</div>
<div style="left:1419px;top:757px;width:114px;height:19px;background:#f2f2f2;"></div>
<div class="t" style="right:389.5px;top:760.15px;font-size:14px;line-height:14px;color:#000000;font-weight:400;">R$ 295.362,30</div>
<div style="left:1534px;top:757px;width:114px;height:19px;background:#f2f2f2;"></div>
<div class="t" style="right:274.5px;top:760.15px;font-size:14px;line-height:14px;color:#000000;font-weight:400;">R$ 2.378,00</div>
<div style="left:1649px;top:757px;width:88px;height:19px;background:#f2f2f2;"></div>
<div class="t" style="right:185.5px;top:760.15px;font-size:14px;line-height:14px;color:#000000;font-weight:400;">335,0</div>
<div style="left:1738px;top:757px;width:70px;height:19px;background:#f2f2f2;"></div>
<div class="t" style="right:115px;top:760.15px;font-size:14px;line-height:14px;color:#000000;font-weight:400;">1</div>
<div style="left:29px;top:777px;width:55px;height:19px;background:#bfbfbf;"></div>
<div class="t" style="right:1838.5px;top:780.15px;font-size:14px;line-height:14px;color:#000000;font-weight:400;">26</div>
<div style="left:85px;top:777px;width:114px;height:19px;background:#f2f2f2;"></div>
<div class="t" style="right:1723.5px;top:780.15px;font-size:14px;line-height:14px;color:#000000;font-weight:400;">R$ 295.362,30</div>
<div style="left:200px;top:777px;width:114px;height:19px;background:#f2f2f2;"></div>
<div class="t" style="right:1608.5px;top:780.15px;font-size:14px;line-height:14px;color:#000000;font-weight:400;">R$ 2.174,22</div>
<div style="left:315px;top:777px;width:114px;height:19px;background:#f2f2f2;"></div>
<div class="t" style="right:1493.5px;top:780.15px;font-size:14px;line-height:14px;color:#000000;font-weight:400;">R$ 2.378,00</div>
<div style="left:430px;top:777px;width:114px;height:19px;background:#f2f2f2;"></div>
<div class="t" style="right:1378.5px;top:780.15px;font-size:14px;line-height:14px;color:#000000;font-weight:400;">R$ 90,00</div>
<div style="left:545px;top:777px;width:114px;height:19px;background:#f2f2f2;"></div>
<div class="t" style="right:1263.5px;top:780.15px;font-size:14px;line-height:14px;color:#000000;font-weight:400;">R$ 2.468,00</div>
<div style="left:660px;top:777px;width:114px;height:19px;background:#f2f2f2;"></div>
<div class="t" style="right:1148.5px;top:780.15px;font-size:14px;line-height:14px;color:#000000;font-weight:400;">R$ 295.158,52</div>
<div style="left:775px;top:777px;width:114px;height:19px;background:#f2f2f2;"></div>
<div class="t" style="right:1033.5px;top:780.15px;font-size:14px;line-height:14px;color:#000000;font-weight:400;">R$ 2.378,00</div>
<div style="left:890px;top:777px;width:88px;height:19px;background:#f2f2f2;"></div>
<div class="t" style="right:944.5px;top:780.15px;font-size:14px;line-height:14px;color:#000000;font-weight:400;">334,0</div>
<div style="left:979px;top:777px;width:114px;height:19px;background:#c6e0b4;"></div>
<div style="left:1094px;top:777px;width:94px;height:19px;background:#c6e0b4;"></div>
<div style="left:1189px;top:777px;width:114px;height:19px;background:#f2f2f2;"></div>
<div class="t" style="right:619.5px;top:780.15px;font-size:14px;line-height:14px;color:#000000;font-weight:400;">R$ 0,00</div>
<div style="left:1304px;top:777px;width:114px;height:19px;background:#f2f2f2;"></div>
<div class="t" style="right:504.5px;top:780.15px;font-size:14px;line-height:14px;color:#000000;font-weight:400;">R$ 2.468,00</div>
<div style="left:1419px;top:777px;width:114px;height:19px;background:#f2f2f2;"></div>
<div class="t" style="right:389.5px;top:780.15px;font-size:14px;line-height:14px;color:#000000;font-weight:400;">R$ 295.158,52</div>
<div style="left:1534px;top:777px;width:114px;height:19px;background:#f2f2f2;"></div>
<div class="t" style="right:274.5px;top:780.15px;font-size:14px;line-height:14px;color:#000000;font-weight:400;">R$ 2.378,00</div>
<div style="left:1649px;top:777px;width:88px;height:19px;background:#f2f2f2;"></div>
<div class="t" style="right:185.5px;top:780.15px;font-size:14px;line-height:14px;color:#000000;font-weight:400;">334,0</div>
<div style="left:1738px;top:777px;width:70px;height:19px;background:#f2f2f2;"></div>
<div class="t" style="right:115px;top:780.15px;font-size:14px;line-height:14px;color:#000000;font-weight:400;">1</div>
<div style="left:29px;top:797px;width:55px;height:19px;background:#bfbfbf;"></div>
<div class="t" style="right:1838.5px;top:800.15px;font-size:14px;line-height:14px;color:#000000;font-weight:400;">27</div>
<div style="left:85px;top:797px;width:114px;height:19px;background:#f2f2f2;"></div>
<div class="t" style="right:1723.5px;top:800.15px;font-size:14px;line-height:14px;color:#000000;font-weight:400;">R$ 295.158,52</div>
<div style="left:200px;top:797px;width:114px;height:19px;background:#f2f2f2;"></div>
<div class="t" style="right:1608.5px;top:800.15px;font-size:14px;line-height:14px;color:#000000;font-weight:400;">R$ 2.172,72</div>
<div style="left:315px;top:797px;width:114px;height:19px;background:#f2f2f2;"></div>
<div class="t" style="right:1493.5px;top:800.15px;font-size:14px;line-height:14px;color:#000000;font-weight:400;">R$ 2.378,00</div>
<div style="left:430px;top:797px;width:114px;height:19px;background:#f2f2f2;"></div>
<div class="t" style="right:1378.5px;top:800.15px;font-size:14px;line-height:14px;color:#000000;font-weight:400;">R$ 90,00</div>
<div style="left:545px;top:797px;width:114px;height:19px;background:#f2f2f2;"></div>
<div class="t" style="right:1263.5px;top:800.15px;font-size:14px;line-height:14px;color:#000000;font-weight:400;">R$ 2.468,00</div>
<div style="left:660px;top:797px;width:114px;height:19px;background:#f2f2f2;"></div>
<div class="t" style="right:1148.5px;top:800.15px;font-size:14px;line-height:14px;color:#000000;font-weight:400;">R$ 294.953,23</div>
<div style="left:775px;top:797px;width:114px;height:19px;background:#f2f2f2;"></div>
<div class="t" style="right:1033.5px;top:800.15px;font-size:14px;line-height:14px;color:#000000;font-weight:400;">R$ 2.378,00</div>
<div style="left:890px;top:797px;width:88px;height:19px;background:#f2f2f2;"></div>
<div class="t" style="right:944.5px;top:800.15px;font-size:14px;line-height:14px;color:#000000;font-weight:400;">333,0</div>
<div style="left:979px;top:797px;width:114px;height:19px;background:#c6e0b4;"></div>
<div style="left:1094px;top:797px;width:94px;height:19px;background:#c6e0b4;"></div>
<div style="left:1189px;top:797px;width:114px;height:19px;background:#f2f2f2;"></div>
<div class="t" style="right:619.5px;top:800.15px;font-size:14px;line-height:14px;color:#000000;font-weight:400;">R$ 0,00</div>
<div style="left:1304px;top:797px;width:114px;height:19px;background:#f2f2f2;"></div>
<div class="t" style="right:504.5px;top:800.15px;font-size:14px;line-height:14px;color:#000000;font-weight:400;">R$ 2.468,00</div>
<div style="left:1419px;top:797px;width:114px;height:19px;background:#f2f2f2;"></div>
<div class="t" style="right:389.5px;top:800.15px;font-size:14px;line-height:14px;color:#000000;font-weight:400;">R$ 294.953,23</div>
<div style="left:1534px;top:797px;width:114px;height:19px;background:#f2f2f2;"></div>
<div class="t" style="right:274.5px;top:800.15px;font-size:14px;line-height:14px;color:#000000;font-weight:400;">R$ 2.378,00</div>
<div style="left:1649px;top:797px;width:88px;height:19px;background:#f2f2f2;"></div>
<div class="t" style="right:185.5px;top:800.15px;font-size:14px;line-height:14px;color:#000000;font-weight:400;">333,0</div>
<div style="left:1738px;top:797px;width:70px;height:19px;background:#f2f2f2;"></div>
<div class="t" style="right:115px;top:800.15px;font-size:14px;line-height:14px;color:#000000;font-weight:400;">1</div>
<div style="left:29px;top:817px;width:55px;height:19px;background:#bfbfbf;"></div>
<div class="t" style="right:1838.5px;top:820.15px;font-size:14px;line-height:14px;color:#000000;font-weight:400;">28</div>
<div style="left:85px;top:817px;width:114px;height:19px;background:#f2f2f2;"></div>
<div class="t" style="right:1723.5px;top:820.15px;font-size:14px;line-height:14px;color:#000000;font-weight:400;">R$ 294.953,23</div>
<div style="left:200px;top:817px;width:114px;height:19px;background:#f2f2f2;"></div>
<div class="t" style="right:1608.5px;top:820.15px;font-size:14px;line-height:14px;color:#000000;font-weight:400;">R$ 2.171,21</div>
<div style="left:315px;top:817px;width:114px;height:19px;background:#f2f2f2;"></div>
<div class="t" style="right:1493.5px;top:820.15px;font-size:14px;line-height:14px;color:#000000;font-weight:400;">R$ 2.378,00</div>
<div style="left:430px;top:817px;width:114px;height:19px;background:#f2f2f2;"></div>
<div class="t" style="right:1378.5px;top:820.15px;font-size:14px;line-height:14px;color:#000000;font-weight:400;">R$ 90,00</div>
<div style="left:545px;top:817px;width:114px;height:19px;background:#f2f2f2;"></div>
<div class="t" style="right:1263.5px;top:820.15px;font-size:14px;line-height:14px;color:#000000;font-weight:400;">R$ 2.468,00</div>
<div style="left:660px;top:817px;width:114px;height:19px;background:#f2f2f2;"></div>
<div class="t" style="right:1148.5px;top:820.15px;font-size:14px;line-height:14px;color:#000000;font-weight:400;">R$ 294.746,44</div>
<div style="left:775px;top:817px;width:114px;height:19px;background:#f2f2f2;"></div>
<div class="t" style="right:1033.5px;top:820.15px;font-size:14px;line-height:14px;color:#000000;font-weight:400;">R$ 2.378,00</div>
<div style="left:890px;top:817px;width:88px;height:19px;background:#f2f2f2;"></div>
<div class="t" style="right:944.5px;top:820.15px;font-size:14px;line-height:14px;color:#000000;font-weight:400;">332,0</div>
<div style="left:979px;top:817px;width:114px;height:19px;background:#c6e0b4;"></div>
<div style="left:1094px;top:817px;width:94px;height:19px;background:#c6e0b4;"></div>
<div style="left:1189px;top:817px;width:114px;height:19px;background:#f2f2f2;"></div>
<div class="t" style="right:619.5px;top:820.15px;font-size:14px;line-height:14px;color:#000000;font-weight:400;">R$ 0,00</div>
<div style="left:1304px;top:817px;width:114px;height:19px;background:#f2f2f2;"></div>
<div class="t" style="right:504.5px;top:820.15px;font-size:14px;line-height:14px;color:#000000;font-weight:400;">R$ 2.468,00</div>
<div style="left:1419px;top:817px;width:114px;height:19px;background:#f2f2f2;"></div>
<div class="t" style="right:389.5px;top:820.15px;font-size:14px;line-height:14px;color:#000000;font-weight:400;">R$ 294.746,44</div>
<div style="left:1534px;top:817px;width:114px;height:19px;background:#f2f2f2;"></div>
<div class="t" style="right:274.5px;top:820.15px;font-size:14px;line-height:14px;color:#000000;font-weight:400;">R$ 2.378,00</div>
<div style="left:1649px;top:817px;width:88px;height:19px;background:#f2f2f2;"></div>
<div class="t" style="right:185.5px;top:820.15px;font-size:14px;line-height:14px;color:#000000;font-weight:400;">332,0</div>
<div style="left:1738px;top:817px;width:70px;height:19px;background:#f2f2f2;"></div>
<div class="t" style="right:115px;top:820.15px;font-size:14px;line-height:14px;color:#000000;font-weight:400;">1</div>
<div style="left:29px;top:837px;width:55px;height:19px;background:#bfbfbf;"></div>
<div class="t" style="right:1838.5px;top:840.15px;font-size:14px;line-height:14px;color:#000000;font-weight:400;">29</div>
<div style="left:85px;top:837px;width:114px;height:19px;background:#f2f2f2;"></div>
<div class="t" style="right:1723.5px;top:840.15px;font-size:14px;line-height:14px;color:#000000;font-weight:400;">R$ 294.746,44</div>
<div style="left:200px;top:837px;width:114px;height:19px;background:#f2f2f2;"></div>
<div class="t" style="right:1608.5px;top:840.15px;font-size:14px;line-height:14px;color:#000000;font-weight:400;">R$ 2.169,69</div>
<div style="left:315px;top:837px;width:114px;height:19px;background:#f2f2f2;"></div>
<div class="t" style="right:1493.5px;top:840.15px;font-size:14px;line-height:14px;color:#000000;font-weight:400;">R$ 2.378,00</div>
<div style="left:430px;top:837px;width:114px;height:19px;background:#f2f2f2;"></div>
<div class="t" style="right:1378.5px;top:840.15px;font-size:14px;line-height:14px;color:#000000;font-weight:400;">R$ 90,00</div>
<div style="left:545px;top:837px;width:114px;height:19px;background:#f2f2f2;"></div>
<div class="t" style="right:1263.5px;top:840.15px;font-size:14px;line-height:14px;color:#000000;font-weight:400;">R$ 2.468,00</div>
<div style="left:660px;top:837px;width:114px;height:19px;background:#f2f2f2;"></div>
<div class="t" style="right:1148.5px;top:840.15px;font-size:14px;line-height:14px;color:#000000;font-weight:400;">R$ 294.538,13</div>
<div style="left:775px;top:837px;width:114px;height:19px;background:#f2f2f2;"></div>
<div class="t" style="right:1033.5px;top:840.15px;font-size:14px;line-height:14px;color:#000000;font-weight:400;">R$ 2.378,00</div>
<div style="left:890px;top:837px;width:88px;height:19px;background:#f2f2f2;"></div>
<div class="t" style="right:944.5px;top:840.15px;font-size:14px;line-height:14px;color:#000000;font-weight:400;">331,0</div>
<div style="left:979px;top:837px;width:114px;height:19px;background:#c6e0b4;"></div>
<div style="left:1094px;top:837px;width:94px;height:19px;background:#c6e0b4;"></div>
<div style="left:1189px;top:837px;width:114px;height:19px;background:#f2f2f2;"></div>
<div class="t" style="right:619.5px;top:840.15px;font-size:14px;line-height:14px;color:#000000;font-weight:400;">R$ 0,00</div>
<div style="left:1304px;top:837px;width:114px;height:19px;background:#f2f2f2;"></div>
<div class="t" style="right:504.5px;top:840.15px;font-size:14px;line-height:14px;color:#000000;font-weight:400;">R$ 2.468,00</div>
<div style="left:1419px;top:837px;width:114px;height:19px;background:#f2f2f2;"></div>
<div class="t" style="right:389.5px;top:840.15px;font-size:14px;line-height:14px;color:#000000;font-weight:400;">R$ 294.538,13</div>
<div style="left:1534px;top:837px;width:114px;height:19px;background:#f2f2f2;"></div>
<div class="t" style="right:274.5px;top:840.15px;font-size:14px;line-height:14px;color:#000000;font-weight:400;">R$ 2.378,00</div>
<div style="left:1649px;top:837px;width:88px;height:19px;background:#f2f2f2;"></div>
<div class="t" style="right:185.5px;top:840.15px;font-size:14px;line-height:14px;color:#000000;font-weight:400;">331,0</div>
<div style="left:1738px;top:837px;width:70px;height:19px;background:#f2f2f2;"></div>
<div class="t" style="right:115px;top:840.15px;font-size:14px;line-height:14px;color:#000000;font-weight:400;">1</div>
<div style="left:29px;top:857px;width:55px;height:19px;background:#bfbfbf;"></div>
<div class="t" style="right:1838.5px;top:860.15px;font-size:14px;line-height:14px;color:#000000;font-weight:400;">30</div>
<div style="left:85px;top:857px;width:114px;height:19px;background:#f2f2f2;"></div>
<div class="t" style="right:1723.5px;top:860.15px;font-size:14px;line-height:14px;color:#000000;font-weight:400;">R$ 294.538,13</div>
<div style="left:200px;top:857px;width:114px;height:19px;background:#f2f2f2;"></div>
<div class="t" style="right:1608.5px;top:860.15px;font-size:14px;line-height:14px;color:#000000;font-weight:400;">R$ 2.168,15</div>
<div style="left:315px;top:857px;width:114px;height:19px;background:#f2f2f2;"></div>
<div class="t" style="right:1493.5px;top:860.15px;font-size:14px;line-height:14px;color:#000000;font-weight:400;">R$ 2.378,00</div>
<div style="left:430px;top:857px;width:114px;height:19px;background:#f2f2f2;"></div>
<div class="t" style="right:1378.5px;top:860.15px;font-size:14px;line-height:14px;color:#000000;font-weight:400;">R$ 90,00</div>
<div style="left:545px;top:857px;width:114px;height:19px;background:#f2f2f2;"></div>
<div class="t" style="right:1263.5px;top:860.15px;font-size:14px;line-height:14px;color:#000000;font-weight:400;">R$ 2.468,00</div>
<div style="left:660px;top:857px;width:114px;height:19px;background:#f2f2f2;"></div>
<div class="t" style="right:1148.5px;top:860.15px;font-size:14px;line-height:14px;color:#000000;font-weight:400;">R$ 294.328,28</div>
<div style="left:775px;top:857px;width:114px;height:19px;background:#f2f2f2;"></div>
<div class="t" style="right:1033.5px;top:860.15px;font-size:14px;line-height:14px;color:#000000;font-weight:400;">R$ 2.378,00</div>
<div style="left:890px;top:857px;width:88px;height:19px;background:#f2f2f2;"></div>
<div class="t" style="right:944.5px;top:860.15px;font-size:14px;line-height:14px;color:#000000;font-weight:400;">330,0</div>
<div style="left:979px;top:857px;width:114px;height:19px;background:#c6e0b4;"></div>
<div style="left:1094px;top:857px;width:94px;height:19px;background:#c6e0b4;"></div>
<div style="left:1189px;top:857px;width:114px;height:19px;background:#f2f2f2;"></div>
<div class="t" style="right:619.5px;top:860.15px;font-size:14px;line-height:14px;color:#000000;font-weight:400;">R$ 0,00</div>
<div style="left:1304px;top:857px;width:114px;height:19px;background:#f2f2f2;"></div>
<div class="t" style="right:504.5px;top:860.15px;font-size:14px;line-height:14px;color:#000000;font-weight:400;">R$ 2.468,00</div>
<div style="left:1419px;top:857px;width:114px;height:19px;background:#f2f2f2;"></div>
<div class="t" style="right:389.5px;top:860.15px;font-size:14px;line-height:14px;color:#000000;font-weight:400;">R$ 294.328,28</div>
<div style="left:1534px;top:857px;width:114px;height:19px;background:#f2f2f2;"></div>
<div class="t" style="right:274.5px;top:860.15px;font-size:14px;line-height:14px;color:#000000;font-weight:400;">R$ 2.378,00</div>
<div style="left:1649px;top:857px;width:88px;height:19px;background:#f2f2f2;"></div>
<div class="t" style="right:185.5px;top:860.15px;font-size:14px;line-height:14px;color:#000000;font-weight:400;">330,0</div>
<div style="left:1738px;top:857px;width:70px;height:19px;background:#f2f2f2;"></div>
<div class="t" style="right:115px;top:860.15px;font-size:14px;line-height:14px;color:#000000;font-weight:400;">1</div>
<div style="left:29px;top:877px;width:55px;height:19px;background:#bfbfbf;"></div>
<div class="t" style="right:1838.5px;top:880.15px;font-size:14px;line-height:14px;color:#000000;font-weight:400;">31</div>
<div style="left:85px;top:877px;width:114px;height:19px;background:#f2f2f2;"></div>
<div class="t" style="right:1723.5px;top:880.15px;font-size:14px;line-height:14px;color:#000000;font-weight:400;">R$ 294.328,28</div>
<div style="left:200px;top:877px;width:114px;height:19px;background:#f2f2f2;"></div>
<div class="t" style="right:1608.5px;top:880.15px;font-size:14px;line-height:14px;color:#000000;font-weight:400;">R$ 2.166,61</div>
<div style="left:315px;top:877px;width:114px;height:19px;background:#f2f2f2;"></div>
<div class="t" style="right:1493.5px;top:880.15px;font-size:14px;line-height:14px;color:#000000;font-weight:400;">R$ 2.378,00</div>
<div style="left:430px;top:877px;width:114px;height:19px;background:#f2f2f2;"></div>
<div class="t" style="right:1378.5px;top:880.15px;font-size:14px;line-height:14px;color:#000000;font-weight:400;">R$ 90,00</div>
<div style="left:545px;top:877px;width:114px;height:19px;background:#f2f2f2;"></div>
<div class="t" style="right:1263.5px;top:880.15px;font-size:14px;line-height:14px;color:#000000;font-weight:400;">R$ 2.468,00</div>
<div style="left:660px;top:877px;width:114px;height:19px;background:#f2f2f2;"></div>
<div class="t" style="right:1148.5px;top:880.15px;font-size:14px;line-height:14px;color:#000000;font-weight:400;">R$ 294.116,89</div>
<div style="left:775px;top:877px;width:114px;height:19px;background:#f2f2f2;"></div>
<div class="t" style="right:1033.5px;top:880.15px;font-size:14px;line-height:14px;color:#000000;font-weight:400;">R$ 2.378,00</div>
<div style="left:890px;top:877px;width:88px;height:19px;background:#f2f2f2;"></div>
<div class="t" style="right:944.5px;top:880.15px;font-size:14px;line-height:14px;color:#000000;font-weight:400;">329,0</div>
<div style="left:979px;top:877px;width:114px;height:19px;background:#c6e0b4;"></div>
<div style="left:1094px;top:877px;width:94px;height:19px;background:#c6e0b4;"></div>
<div style="left:1189px;top:877px;width:114px;height:19px;background:#f2f2f2;"></div>
<div class="t" style="right:619.5px;top:880.15px;font-size:14px;line-height:14px;color:#000000;font-weight:400;">R$ 0,00</div>
<div style="left:1304px;top:877px;width:114px;height:19px;background:#f2f2f2;"></div>
<div class="t" style="right:504.5px;top:880.15px;font-size:14px;line-height:14px;color:#000000;font-weight:400;">R$ 2.468,00</div>
<div style="left:1419px;top:877px;width:114px;height:19px;background:#f2f2f2;"></div>
<div class="t" style="right:389.5px;top:880.15px;font-size:14px;line-height:14px;color:#000000;font-weight:400;">R$ 294.116,89</div>
<div style="left:1534px;top:877px;width:114px;height:19px;background:#f2f2f2;"></div>
<div class="t" style="right:274.5px;top:880.15px;font-size:14px;line-height:14px;color:#000000;font-weight:400;">R$ 2.378,00</div>
<div style="left:1649px;top:877px;width:88px;height:19px;background:#f2f2f2;"></div>
<div class="t" style="right:185.5px;top:880.15px;font-size:14px;line-height:14px;color:#000000;font-weight:400;">329,0</div>
<div style="left:1738px;top:877px;width:70px;height:19px;background:#f2f2f2;"></div>
<div class="t" style="right:115px;top:880.15px;font-size:14px;line-height:14px;color:#000000;font-weight:400;">1</div>
<div style="left:29px;top:276px;width:1865px;height:1px;background:#a6a6a6;"></div>
<div style="left:1897px;top:215px;width:21px;height:685px;background:#383838;border-radius:10px;"></div>
<svg style="position:absolute;left:1901px;top:221px;" width="13" height="9" viewBox="0 0 13 9"><path d="M6.5 1L12 8H1z" fill="#c8c8c8" stroke="#c8c8c8" stroke-linejoin="round"/></svg>
<div style="left:1902px;top:236px;width:11px;height:45px;background:#c0c0c0;border-radius:6px;"></div>
<svg style="position:absolute;left:1901px;top:885px;" width="13" height="9" viewBox="0 0 13 9"><path d="M6.5 8L12 1H1z" fill="#c8c8c8" stroke="#c8c8c8" stroke-linejoin="round"/></svg>
<svg style="position:absolute;left:30px;top:909px;" width="10" height="16" viewBox="0 0 10 16"><path d="M8 1L2 8l6 7" fill="none" stroke="#a0a0a0" stroke-width="1.3"/></svg>
<svg style="position:absolute;left:70px;top:909px;" width="10" height="16" viewBox="0 0 10 16"><path d="M2 1l6 7-6 7" fill="none" stroke="#a0a0a0" stroke-width="1.3"/></svg>
<div class="t" style="left:153px;top:910.61px;font-size:17px;line-height:17px;color:#ffffff;font-weight:400;transform:scaleX(1.0123);transform-origin:left 0;">Inicial</div>
<div style="left:215px;top:906px;width:1px;height:24px;background:#7a7a7a;"></div>
<div class="t" style="left:233px;top:910.61px;font-size:17px;line-height:17px;color:#ffffff;font-weight:400;transform:scaleX(0.9048);transform-origin:left 0;">Ent_Res</div>
<div style="left:309px;top:906px;width:1px;height:24px;background:#7a7a7a;"></div>
<div style="left:315px;top:897px;width:98px;height:36px;background:#ffffff;border-radius:0 0 7px 7px;"></div>
<svg style="position:absolute;left:307px;top:897px;" width="8" height="8" viewBox="0 0 8 8"><path d="M0 0h8v8A8 8 0 0 0 0 0z" fill="#ffffff"/></svg>
<svg style="position:absolute;left:413px;top:897px;" width="8" height="8" viewBox="0 0 8 8"><path d="M8 0H0v8A8 8 0 0 1 8 0z" fill="#ffffff"/></svg>
<div class="t" style="left:325px;top:906.61px;font-size:17px;line-height:17px;color:#000000;font-weight:700;transform:scaleX(0.9749);transform-origin:left 0;">Tab_Price</div>
<div style="left:325px;top:928px;width:78px;height:2px;background:#107c41;"></div>
<div style="left:418px;top:906px;width:1px;height:24px;background:#7a7a7a;"></div>
<svg style="position:absolute;left:470px;top:909px;" width="16" height="16" viewBox="0 0 16 16"><path d="M8 1v14M1 8h14" stroke="#e0e0e0" stroke-width="1.5"/></svg>
<svg style="position:absolute;left:1153px;top:909px;" width="5" height="15" viewBox="0 0 5 15"><rect x="0.5" y="0" width="3" height="3" fill="#d0d0d0"/><rect x="0.5" y="6" width="3" height="3" fill="#d0d0d0"/><rect x="0.5" y="12" width="3" height="3" fill="#d0d0d0"/></svg>
<div style="left:1177px;top:907px;width:717px;height:20px;background:#383838;border-radius:10px;"></div>
<svg style="position:absolute;left:1181px;top:911px;" width="10" height="12" viewBox="0 0 10 12"><path d="M9 1L2 6l7 5z" fill="#c8c8c8" stroke="#c8c8c8" stroke-linejoin="round"/></svg>
<div style="left:1197px;top:911px;width:650px;height:11px;background:#c0c0c0;border-radius:6px;"></div>
<svg style="position:absolute;left:1879px;top:911px;" width="10" height="12" viewBox="0 0 10 12"><path d="M1 1l7 5-7 5z" fill="#c8c8c8" stroke="#c8c8c8" stroke-linejoin="round"/></svg>
<div style="left:0px;top:938px;width:1920px;height:24px;background:#383838;"></div>
<div class="t" style="left:9px;top:945.15px;font-size:14px;line-height:14px;color:#ffffff;font-weight:400;transform:scaleX(0.9212);transform-origin:left 0;">Pronto</div>
<svg style="position:absolute;left:70px;top:942px;" width="24" height="20" viewBox="0 0 24 20"><rect x="3.8" y="2.6" width="17" height="14.6" fill="none" stroke="#ffffff" stroke-width="1.5"/><path d="M5.5 5H19.8" stroke="#ffffff" stroke-width="1.2"/><path d="M6 8.5h3M6 11.5h3M6 14.5h3" stroke="#ffffff" stroke-width="1.1"/><circle cx="15" cy="13" r="5.2" fill="#383838" stroke="#ffffff" stroke-width="1.5"/><circle cx="15" cy="13" r="2.6" fill="#ffffff"/></svg>
<svg style="position:absolute;left:112px;top:942px;" width="22" height="20" viewBox="0 0 22 20"><circle cx="9.5" cy="3.2" r="1.8" fill="none" stroke="#ffffff" stroke-width="1.3"/><path d="M2 4.5c1 2 4 3 5.5 3.2c0 3-1 6-1.5 9c1 1.5 2 0 2.5-2c.5 1 1 1.5 1.5 1.5M11.5 7.7c1.5-.3 3.5-1.3 4.5-3.2M11.5 7.7l.5 4" fill="none" stroke="#ffffff" stroke-width="1.3" stroke-linecap="round" stroke-linejoin="round"/><path d="M11 11l7 8M18 11l-7 8" stroke="#ffffff" stroke-width="1.1"/></svg>
<div class="t" style="left:135px;top:945.15px;font-size:14px;line-height:14px;color:#ffffff;font-weight:400;transform:scaleX(0.9288);transform-origin:left 0;">Acessibilidade: investigar</div>
<div style="left:1548px;top:938px;width:50px;height:24px;background:#444444;"></div>
<svg style="position:absolute;left:1564px;top:943px;" width="17" height="17" viewBox="0 0 17 17"><rect x="1" y="1" width="15" height="15" fill="none" stroke="#e0e0e0" stroke-width="1.3"/><path d="M6 1v15M11 1v15M1 6h15M1 11h15" stroke="#e0e0e0" stroke-width="1.2"/></svg>
<svg style="position:absolute;left:1614px;top:943px;" width="18" height="17" viewBox="0 0 18 17"><rect x="1" y="1" width="16" height="15" fill="none" stroke="#e0e0e0" stroke-width="1.3"/><rect x="4" y="4" width="10" height="9" fill="none" stroke="#e0e0e0" stroke-width="1.1"/><path d="M6 7h6M6 10h6" stroke="#e0e0e0" stroke-width="1"/></svg>
<svg style="position:absolute;left:1664px;top:943px;" width="18" height="17" viewBox="0 0 18 17"><path d="M1 1h16v15H1zM1 11h7V1M11 1v6h6" fill="none" stroke="#e0e0e0" stroke-width="1.3"/></svg>
<div style="left:1705px;top:951px;width:10px;height:1px;background:#e0e0e0;"></div>
<div style="left:1722px;top:951px;width:124px;height:1px;background:#9a9a9a;"></div>
<div style="left:1770px;top:944px;width:6px;height:14px;background:#c8c8c8;border-radius:1px;"></div>
<div style="left:1782px;top:947px;width:1px;height:9px;background:#c8c8c8;"></div>
<svg style="position:absolute;left:1850px;top:944px;" width="14" height="14" viewBox="0 0 14 14"><path d="M7 1v12M1 7h12" stroke="#e0e0e0" stroke-width="1.3"/></svg>
<div class="t" style="left:1877px;top:946.00px;font-size:13px;line-height:13px;color:#ffffff;font-weight:400;transform:scaleX(0.9993);transform-origin:left 0;">85%</div></body></html>
